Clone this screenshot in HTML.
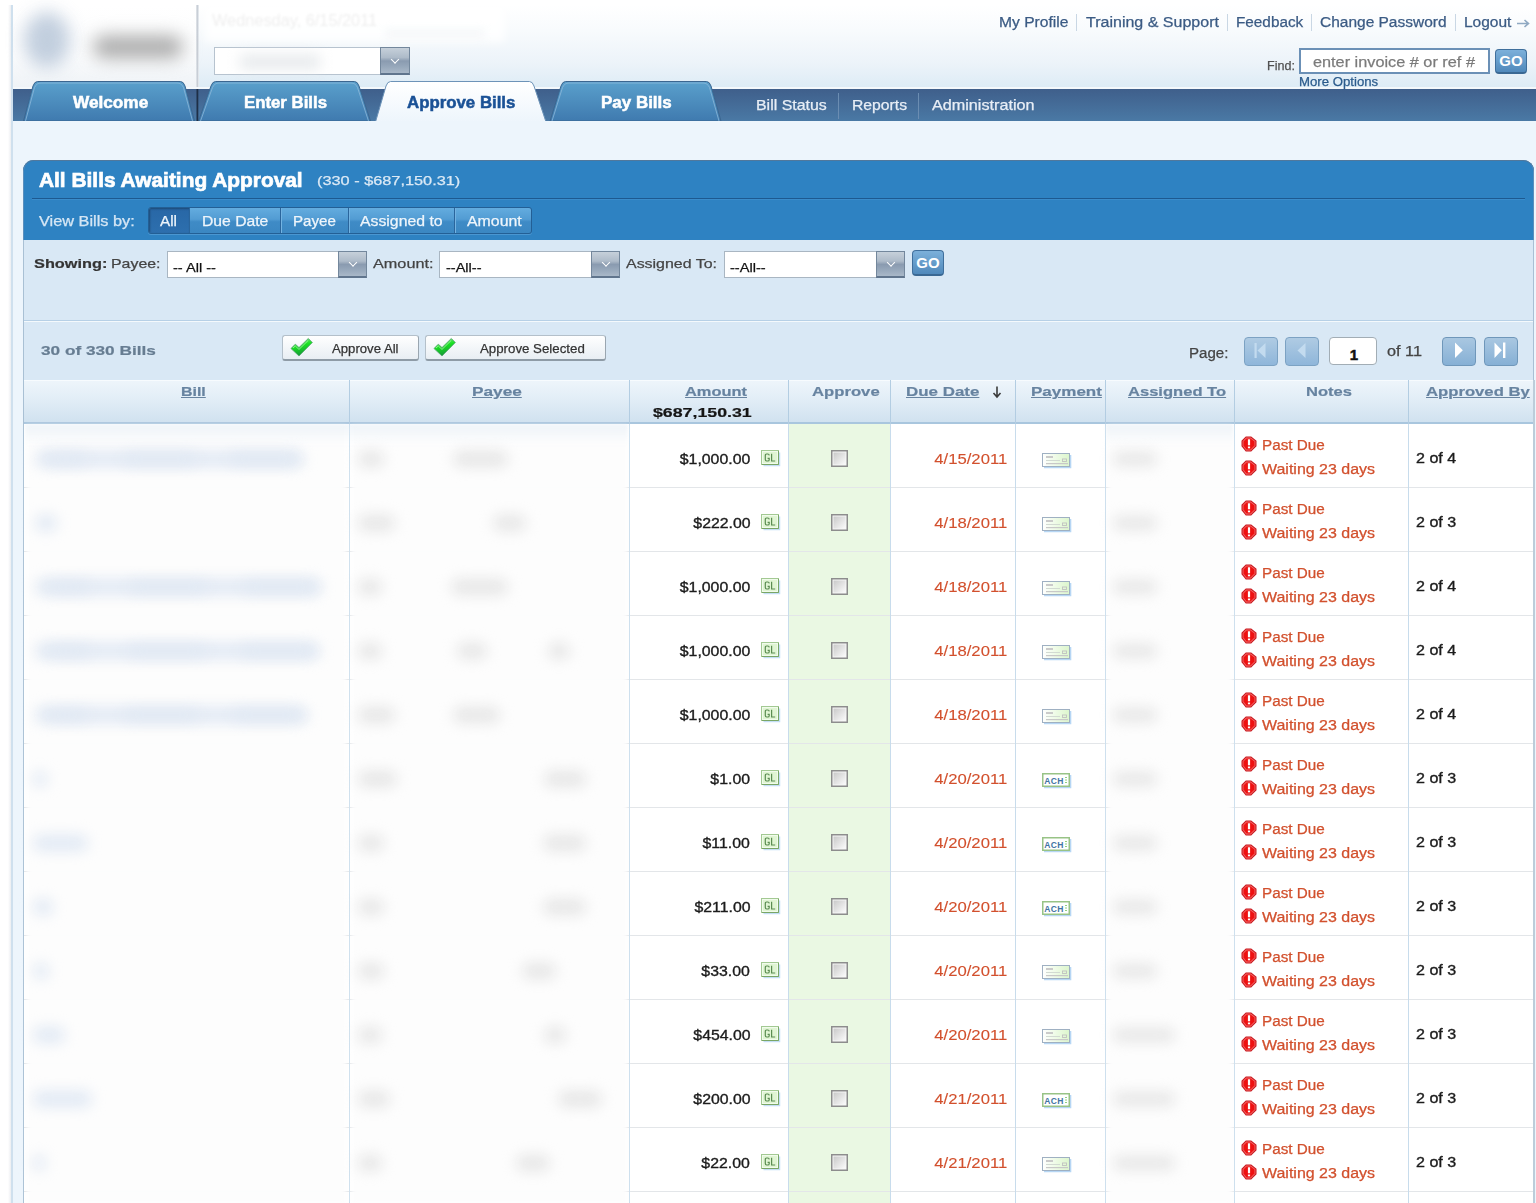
<!DOCTYPE html>
<html><head><meta charset="utf-8">
<style>
html,body{margin:0;padding:0;width:1536px;height:1203px;overflow:hidden;background:#fff;font-family:"Liberation Sans",sans-serif;}
.a{position:absolute;}
.t{position:absolute;white-space:nowrap;}
.sep{position:absolute;width:1px;background:#c9d7e4;}
.nsep{position:absolute;width:1px;background:#6b8db2;top:93px;height:26px;}
.sel{position:absolute;background:#fff;border:1px solid #a9b6c2;box-sizing:border-box;}
.selb{position:absolute;background:linear-gradient(#c6d0da 0%,#aebbc9 38%,#8a9bb0 52%,#97a8bb 75%,#a9b8c8 100%);border:1px solid #73879c;border-bottom:2px solid #60758d;box-sizing:border-box;}
.selb:after{content:"";position:absolute;left:50%;top:50%;width:5px;height:5px;border-right:1.5px solid #fff;border-bottom:1.5px solid #fff;transform:translate(-50%,-75%) rotate(45deg);}
.gob{position:absolute;background:linear-gradient(#7cb0da,#5089bb);border:1px solid #3f6f9c;border-bottom:2px solid #3a6893;border-radius:4px;box-sizing:border-box;color:#fff;font-weight:bold;text-align:center;}
.pg{position:absolute;top:337px;width:34px;height:29px;border-radius:4px;box-sizing:border-box;}
.pgd{background:linear-gradient(#afcbe3,#8fb6da);border:1.5px solid #7ca2c3;}
.pga{background:linear-gradient(#a9c7e1,#86b0d5);border:1.5px solid #6f97ba;}
.cd{position:absolute;width:1px;background:#bcd3e6;}
.rl{position:absolute;height:1px;background:#e3e6e9;}
.blob{position:absolute;border-radius:50%;}
</style></head><body>
<!-- left page edge -->
<div class="a" style="left:8px;top:5px;width:4px;height:1198px;background:linear-gradient(90deg,rgba(200,205,215,0),rgba(200,205,215,.45))"></div>
<div class="a" style="left:11px;top:5px;width:2px;height:1198px;background:#cfe0ee"></div>
<!-- header -->
<div class="a" style="left:13px;top:5px;width:1523px;height:84px;background:linear-gradient(#ffffff 0%,#f8fbfd 30%,#ecf3f9 70%,#dcebf5 100%)"></div>
<div class="a" style="left:13px;top:5px;width:184px;height:84px;background:linear-gradient(#ffffff 0%,#fbfcfd 60%,#eef2f6 100%)"></div>
<div class="a" style="left:196px;top:5px;width:3px;height:84px;background:linear-gradient(90deg,#e4e8ec,#c8ced6,#eef2f6)"></div>
<!-- logo blur -->
<div class="blob" style="left:24px;top:12px;width:46px;height:56px;background:#bccadb;filter:blur(9px);opacity:.9"></div>
<div class="a" style="left:93px;top:36px;width:90px;height:22px;border-radius:11px;background:#aaaaaa;filter:blur(9px)"></div>
<!-- header faint text -->
<div class="a" style="left:205px;top:6px;width:300px;height:36px;background:rgba(255,255,255,.85);filter:blur(4px)"></div>
<div class="a" style="left:212px;top:12px;font-size:16px;line-height:18px;color:#efefef;white-space:nowrap;filter:blur(0.8px);transform:scaleX(1.02);transform-origin:0 0">Wednesday, 6/15/2011</div>
<div class="a" style="left:385px;top:30px;width:100px;height:7px;background:#f4f6f8;filter:blur(4px)"></div>
<!-- header dropdown -->
<div class="sel" style="left:214px;top:47px;width:167px;height:28px;border-color:#b7c3cf"></div>
<div class="a" style="left:240px;top:55px;width:80px;height:14px;background:#e6e9ec;filter:blur(7px)"></div>
<div class="selb" style="left:380px;top:47px;width:30px;height:28px"></div>
<!-- top links separators -->
<div class="sep" style="left:1076px;top:14px;height:17px"></div>
<div class="sep" style="left:1227px;top:14px;height:17px"></div>
<div class="sep" style="left:1311px;top:14px;height:17px"></div>
<div class="sep" style="left:1455px;top:14px;height:17px"></div>
<svg class="a" style="left:1515px;top:17px" width="16" height="12" viewBox="0 0 16 12"><path d="M2 6.5H13M9.5 3L13.5 6.5L9.5 10" stroke="#8fa9c2" stroke-width="1.6" fill="none"/></svg>
<!-- find box -->
<div class="a" style="left:1299px;top:48px;width:191px;height:26px;background:#fff;border:2px solid #6b90b6;box-sizing:border-box"></div>
<div class="gob" style="left:1495px;top:49px;width:32px;height:25px;font-size:15px;line-height:22px">GO</div>
<!-- nav bar -->
<div class="a" style="left:13px;top:87px;width:1523px;height:2px;background:#f4f8fb"></div>
<div class="a" style="left:13px;top:89px;width:1523px;height:32px;background:linear-gradient(#3f5f8b,#4a79a5)"></div>
<svg class="a" style="left:0;top:78px" width="760" height="44" viewBox="0 78 760 44">
<defs>
<linearGradient id="tb" x1="0" y1="0" x2="0" y2="1"><stop offset="0" stop-color="#5aa0cc"/><stop offset="1" stop-color="#3f7aaf"/></linearGradient>
<linearGradient id="ta" x1="0" y1="0" x2="0" y2="1"><stop offset="0" stop-color="#ffffff"/><stop offset="1" stop-color="#edf5fc"/></linearGradient>
</defs>
<path d="M23.5 121 L33 86 Q34.5 81.5 37.5 81.5 L180.5 81.5 Q183.5 81.5 185 86 L194.5 121 Z" fill="url(#tb)" stroke="#3b6690" stroke-width="1"/>
<path d="M25.5 121 L34.5 87.5 Q36.5 83 41 83 L177 83 Q181.5 83 183.5 87.5 L192.5 121" fill="none" stroke="#8cb8da" stroke-width="1" opacity=".8"/>
<path d="M198.5 121 L211 86 Q212.5 81.5 215.5 81.5 L354.5 81.5 Q357.5 81.5 359 86 L370.5 121 Z" fill="url(#tb)" stroke="#3b6690" stroke-width="1"/>
<path d="M200.5 121 L212.5 87.5 Q214.5 83 219 83 L351 83 Q355.5 83 357.5 87.5 L368.5 121" fill="none" stroke="#8cb8da" stroke-width="1" opacity=".8"/>
<path d="M375.5 122 L386 86 Q387.5 81.5 390.5 81.5 L529.5 81.5 Q532.5 81.5 534 86 L546 122 Z" fill="url(#ta)" stroke="#6d93b8" stroke-width="1"/>
<path d="M377 123 L387.5 87.5 Q389.5 83 394 83 L526 83 Q530.5 83 532.5 87.5 L544.5 123 Z" fill="url(#ta)" stroke="none"/>
<path d="M550 121 L561 86 Q562.5 81.5 565.5 81.5 L706.5 81.5 Q709.5 81.5 711 86 L721 121 Z" fill="url(#tb)" stroke="#3b6690" stroke-width="1"/>
<path d="M552 121 L562.5 87.5 Q564.5 83 569 83 L703 83 Q707.5 83 709.5 87.5 L719 121" fill="none" stroke="#8cb8da" stroke-width="1" opacity=".8"/>
<rect x="196.5" y="89" width="1.8" height="32" fill="#1e2f47"/>
</svg>
<div class="nsep" style="left:838px"></div>
<div class="nsep" style="left:918px"></div>
<!-- content bg -->
<div class="a" style="left:13px;top:121px;width:1523px;height:1082px;background:#edf5fc"></div>
<!-- panel -->
<div class="a" style="left:23px;top:160px;width:1511px;height:80px;background:#2e82c2;border-radius:11px 11px 0 0;box-shadow:inset 0 1px 0 #51789c, inset 1px 0 0 #5b8fbd, inset -1px 0 0 #5b8fbd"></div>
<div class="a" style="left:32px;top:198px;width:1493px;height:1px;background:#1d5990"></div>
<div class="a" style="left:32px;top:199px;width:1493px;height:1px;background:#3a8ccb"></div>
<!-- view by buttons -->
<div class="a" style="left:148px;top:207px;width:384px;height:27px;border:1px solid #235f95;border-radius:3px;box-sizing:border-box;background:linear-gradient(#63acdf 0%,#529cd3 45%,#3f8bc6 55%,#3b87c2 100%);overflow:hidden;box-shadow:0 1px 0 rgba(120,180,230,.4)">
 <div class="a" style="left:0;top:0;width:40px;height:25px;background:linear-gradient(#2867a6,#2d6fae);box-shadow:inset 1px 1px 2px rgba(0,0,0,.3)"></div>
 <div class="a" style="left:40px;top:0;width:1px;height:25px;background:#2a659c"></div>
 <div class="a" style="left:131px;top:0;width:1px;height:25px;background:#2a659c"></div><div class="a" style="left:132px;top:0;width:1px;height:25px;background:#73b3e2"></div>
 <div class="a" style="left:199px;top:0;width:1px;height:25px;background:#2a659c"></div><div class="a" style="left:200px;top:0;width:1px;height:25px;background:#73b3e2"></div>
 <div class="a" style="left:305px;top:0;width:1px;height:25px;background:#2a659c"></div><div class="a" style="left:306px;top:0;width:1px;height:25px;background:#73b3e2"></div>
</div>
<!-- filter area -->
<div class="a" style="left:23px;top:240px;width:1511px;height:1000px;background:#d9e8f5;border-left:1px solid #a9c0d4;border-right:1px solid #a9c0d4;box-sizing:border-box"></div>
<div class="a" style="left:24px;top:320px;width:1509px;height:1px;background:#b7d0e6"></div>
<div class="a" style="left:24px;top:321px;width:1509px;height:1px;background:#f4f9fc"></div>
<div class="sel" style="left:167px;top:251px;width:172px;height:27px"></div>
<div class="selb" style="left:338px;top:251px;width:29px;height:27px"></div>
<div class="sel" style="left:439px;top:251px;width:153px;height:27px"></div>
<div class="selb" style="left:591px;top:251px;width:29px;height:27px"></div>
<div class="sel" style="left:724px;top:251px;width:153px;height:27px"></div>
<div class="selb" style="left:876px;top:251px;width:29px;height:27px"></div>
<div class="gob" style="left:912px;top:250px;width:32px;height:26px;font-size:15px;line-height:23px">GO</div>
<!-- approve buttons -->
<div class="a" style="left:282px;top:335px;width:137px;height:26px;border:1px solid #b4c0ca;border-bottom:2px solid #8e9ba6;border-right:1.5px solid #9aa6b0;border-radius:3px;box-sizing:border-box;background:linear-gradient(#ffffff,#e8eef3)"></div>
<div class="a" style="left:425px;top:335px;width:181px;height:26px;border:1px solid #b4c0ca;border-bottom:2px solid #8e9ba6;border-right:1.5px solid #9aa6b0;border-radius:3px;box-sizing:border-box;background:linear-gradient(#ffffff,#e8eef3)"></div>
<svg class="a" style="left:290px;top:337px" width="23" height="21" viewBox="0 0 23 21"><defs><linearGradient id="ck1" x1="0" y1="0" x2="0.3" y2="1"><stop offset="0" stop-color="#8ef090"/><stop offset=".5" stop-color="#18e020"/><stop offset="1" stop-color="#179a3a"/></linearGradient></defs><path d="M1 11.5 L5.3 7.2 L9 10.6 L18.3 1.5 L22.3 5.5 L9 19 Z" fill="url(#ck1)" stroke="#5aa874" stroke-width="0.9" stroke-linejoin="round"/><path d="M3 11 L5.3 9 L9 12.4 L18.3 3.3" stroke="#b8f7b8" stroke-width="0.9" fill="none" opacity=".8"/></svg>
<svg class="a" style="left:433px;top:337px" width="23" height="21" viewBox="0 0 23 21"><defs><linearGradient id="ck2" x1="0" y1="0" x2="0.3" y2="1"><stop offset="0" stop-color="#8ef090"/><stop offset=".5" stop-color="#18e020"/><stop offset="1" stop-color="#179a3a"/></linearGradient></defs><path d="M1 11.5 L5.3 7.2 L9 10.6 L18.3 1.5 L22.3 5.5 L9 19 Z" fill="url(#ck2)" stroke="#5aa874" stroke-width="0.9" stroke-linejoin="round"/><path d="M3 11 L5.3 9 L9 12.4 L18.3 3.3" stroke="#b8f7b8" stroke-width="0.9" fill="none" opacity=".8"/></svg>
<!-- pager -->
<div class="pg pgd" style="left:1244px"><svg width="31" height="26" viewBox="0 0 31 26"><rect x="9.5" y="5" width="2.2" height="15" fill="#c3dbef"/><path d="M20.5 5 L12.5 12.5 L20.5 20Z" fill="#c3dbef"/></svg></div>
<div class="pg pgd" style="left:1285px"><svg width="31" height="26" viewBox="0 0 31 26"><path d="M19.5 5 L11.5 12.5 L19.5 20Z" fill="#c3dbef"/></svg></div>
<div class="a" style="left:1329px;top:337px;width:48px;height:28px;border:1.5px solid #a2adb5;border-radius:4px;background:#fff;box-sizing:border-box"></div>
<div class="pg pga" style="left:1442px"><svg width="31" height="26" viewBox="0 0 31 26"><path d="M12 4.5 L19.8 12.3 L12 20Z" fill="#fff"/></svg></div>
<div class="pg pga" style="left:1484px"><svg width="31" height="26" viewBox="0 0 31 26"><path d="M9.5 4.5 L16.8 12.3 L9.5 20Z" fill="#fff"/><rect x="18" y="4.5" width="2.4" height="15.5" fill="#fff"/></svg></div>
<!-- table header -->
<div class="a" style="left:24px;top:380px;width:1509px;height:44px;background:linear-gradient(#eef5fb,#e3eef7 40%,#cfe1ef 100%)"></div>
<div class="a" style="left:24px;top:380px;width:1509px;height:1px;background:#f7fbfe"></div>
<div class="a" style="left:24px;top:422px;width:1509px;height:2px;background:#a9c6de"></div>
<div class="a" style="left:24px;top:423.5px;width:1509px;height:1px;background:#c9dcec"></div>
<svg class="a" style="left:990px;top:385px" width="14" height="14" viewBox="0 0 14 14"><path d="M7 1.5V11.5M3.5 8L7 12L10.5 8" stroke="#3b3b3b" stroke-width="1.6" fill="none"/></svg>
<!-- table body -->
<div class="a" style="left:24px;top:424px;width:1509px;height:779px;background:#fff"></div>
<div class="a" style="left:789px;top:424px;width:101px;height:779px;background:#eaf8e3"></div>
<div id="grid"></div>
<div class="rl" style="left:24px;top:487px;width:1509px"></div>
<div class="rl" style="left:24px;top:551px;width:1509px"></div>
<div class="rl" style="left:24px;top:615px;width:1509px"></div>
<div class="rl" style="left:24px;top:679px;width:1509px"></div>
<div class="rl" style="left:24px;top:743px;width:1509px"></div>
<div class="rl" style="left:24px;top:807px;width:1509px"></div>
<div class="rl" style="left:24px;top:871px;width:1509px"></div>
<div class="rl" style="left:24px;top:935px;width:1509px"></div>
<div class="rl" style="left:24px;top:999px;width:1509px"></div>
<div class="rl" style="left:24px;top:1063px;width:1509px"></div>
<div class="rl" style="left:24px;top:1127px;width:1509px"></div>
<div class="rl" style="left:24px;top:1191px;width:1509px"></div>
<div class="rl" style="left:24px;top:1255px;width:1509px"></div>
<div class="cd" style="left:348.5px;top:380px;height:44px;background:#b3cde2"></div>
<div class="cd" style="left:348.5px;top:424px;height:779px;background:#c8dcec"></div>
<div class="cd" style="left:629.0px;top:380px;height:44px;background:#b3cde2"></div>
<div class="cd" style="left:629.0px;top:424px;height:779px;background:#c8dcec"></div>
<div class="cd" style="left:788.0px;top:380px;height:44px;background:#b3cde2"></div>
<div class="cd" style="left:788.0px;top:424px;height:779px;background:#c8dcec"></div>
<div class="cd" style="left:890.0px;top:380px;height:44px;background:#b3cde2"></div>
<div class="cd" style="left:890.0px;top:424px;height:779px;background:#c8dcec"></div>
<div class="cd" style="left:1014.5px;top:380px;height:44px;background:#b3cde2"></div>
<div class="cd" style="left:1014.5px;top:424px;height:779px;background:#c8dcec"></div>
<div class="cd" style="left:1104.5px;top:380px;height:44px;background:#b3cde2"></div>
<div class="cd" style="left:1104.5px;top:424px;height:779px;background:#c8dcec"></div>
<div class="cd" style="left:1234.0px;top:380px;height:44px;background:#b3cde2"></div>
<div class="cd" style="left:1234.0px;top:424px;height:779px;background:#c8dcec"></div>
<div class="cd" style="left:1407.5px;top:380px;height:44px;background:#b3cde2"></div>
<div class="cd" style="left:1407.5px;top:424px;height:779px;background:#c8dcec"></div>
<div class="a" style="left:23px;top:380px;width:1px;height:823px;background:#a9c0d4"></div>
<div class="a" style="left:1533px;top:380px;width:2px;height:823px;background:#bccdda"></div>
<div class="a" style="left:27px;top:426px;width:319px;height:777px;background:rgba(253,253,253,.97);filter:blur(2px)"></div>
<div class="a" style="left:352px;top:426px;width:275px;height:777px;background:rgba(253,253,253,.97);filter:blur(2px)"></div>
<div class="a" style="left:1108px;top:426px;width:124px;height:777px;background:rgba(253,253,253,.97);filter:blur(2px)"></div>
<div class="a" style="left:25px;top:424px;width:603px;height:22px;background:linear-gradient(rgba(214,229,242,.35),rgba(240,246,251,0));filter:blur(1.5px)"></div>
<div class="a" style="left:1106px;top:424px;width:127px;height:22px;background:linear-gradient(rgba(214,229,242,.35),rgba(240,246,251,0));filter:blur(1.5px)"></div>
<div class="blob" style="left:35.0px;top:451px;width:268.6px;height:16px;border-radius:8px;background:#e1e9f4;filter:blur(7px)"></div>
<div class="blob" style="left:45.7px;top:454px;width:41.2px;height:10px;border-radius:5px;background:#e0e8f3;filter:blur(7px)"></div>
<div class="blob" style="left:122.6px;top:454px;width:74.1px;height:10px;border-radius:5px;background:#e0e8f3;filter:blur(7px)"></div>
<div class="blob" style="left:229.7px;top:454px;width:68.7px;height:10px;border-radius:5px;background:#e0e8f3;filter:blur(7px)"></div>
<div class="blob" style="left:358px;top:451px;width:26.4px;height:16px;border-radius:8px;background:#e6e6e6;filter:blur(7px)"></div>
<div class="blob" style="left:453px;top:451px;width:54.5px;height:16px;border-radius:8px;background:#e6e6e6;filter:blur(7px)"></div>
<div class="blob" style="left:1113px;top:452px;width:44.0px;height:14px;border-radius:7px;background:#e6e6e6;filter:blur(7px)"></div>
<div class="blob" style="left:35.0px;top:515px;width:22.0px;height:16px;border-radius:8px;background:#e1e9f4;filter:blur(7px)"></div>
<div class="blob" style="left:358px;top:515px;width:36.5px;height:16px;border-radius:8px;background:#e6e6e6;filter:blur(7px)"></div>
<div class="blob" style="left:493px;top:515px;width:32.7px;height:16px;border-radius:8px;background:#e6e6e6;filter:blur(7px)"></div>
<div class="blob" style="left:1113px;top:516px;width:44.0px;height:14px;border-radius:7px;background:#e6e6e6;filter:blur(7px)"></div>
<div class="blob" style="left:35.0px;top:579px;width:286.8px;height:16px;border-radius:8px;background:#e1e9f4;filter:blur(7px)"></div>
<div class="blob" style="left:46.6px;top:582px;width:43.9px;height:10px;border-radius:5px;background:#e0e8f3;filter:blur(7px)"></div>
<div class="blob" style="left:128.6px;top:582px;width:79.1px;height:10px;border-radius:5px;background:#e0e8f3;filter:blur(7px)"></div>
<div class="blob" style="left:242.8px;top:582px;width:73.2px;height:10px;border-radius:5px;background:#e0e8f3;filter:blur(7px)"></div>
<div class="blob" style="left:358px;top:579px;width:24.0px;height:16px;border-radius:8px;background:#e6e6e6;filter:blur(7px)"></div>
<div class="blob" style="left:451px;top:579px;width:56.5px;height:16px;border-radius:8px;background:#e6e6e6;filter:blur(7px)"></div>
<div class="blob" style="left:1113px;top:580px;width:44.0px;height:14px;border-radius:7px;background:#e6e6e6;filter:blur(7px)"></div>
<div class="blob" style="left:35.0px;top:643px;width:284.8px;height:16px;border-radius:8px;background:#e1e9f4;filter:blur(7px)"></div>
<div class="blob" style="left:46.5px;top:646px;width:43.6px;height:10px;border-radius:5px;background:#e0e8f3;filter:blur(7px)"></div>
<div class="blob" style="left:128.0px;top:646px;width:78.5px;height:10px;border-radius:5px;background:#e0e8f3;filter:blur(7px)"></div>
<div class="blob" style="left:241.4px;top:646px;width:72.7px;height:10px;border-radius:5px;background:#e0e8f3;filter:blur(7px)"></div>
<div class="blob" style="left:358px;top:643px;width:24.0px;height:16px;border-radius:8px;background:#e6e6e6;filter:blur(7px)"></div>
<div class="blob" style="left:457px;top:643px;width:30.0px;height:16px;border-radius:8px;background:#e6e6e6;filter:blur(7px)"></div>
<div class="blob" style="left:548px;top:643px;width:22.0px;height:16px;border-radius:8px;background:#e6e6e6;filter:blur(7px)"></div>
<div class="blob" style="left:1113px;top:644px;width:44.0px;height:14px;border-radius:7px;background:#e6e6e6;filter:blur(7px)"></div>
<div class="blob" style="left:35.0px;top:707px;width:272.7px;height:16px;border-radius:8px;background:#e1e9f4;filter:blur(7px)"></div>
<div class="blob" style="left:45.9px;top:710px;width:41.8px;height:10px;border-radius:5px;background:#e0e8f3;filter:blur(7px)"></div>
<div class="blob" style="left:124.0px;top:710px;width:75.2px;height:10px;border-radius:5px;background:#e0e8f3;filter:blur(7px)"></div>
<div class="blob" style="left:232.7px;top:710px;width:69.7px;height:10px;border-radius:5px;background:#e0e8f3;filter:blur(7px)"></div>
<div class="blob" style="left:358px;top:707px;width:36.5px;height:16px;border-radius:8px;background:#e6e6e6;filter:blur(7px)"></div>
<div class="blob" style="left:453px;top:707px;width:46.5px;height:16px;border-radius:8px;background:#e6e6e6;filter:blur(7px)"></div>
<div class="blob" style="left:1113px;top:708px;width:44.0px;height:14px;border-radius:7px;background:#e6e6e6;filter:blur(7px)"></div>
<div class="blob" style="left:33.0px;top:771px;width:14.0px;height:16px;border-radius:8px;background:#e1e9f4;filter:blur(7px)"></div>
<div class="blob" style="left:358px;top:771px;width:38.5px;height:16px;border-radius:8px;background:#e6e6e6;filter:blur(7px)"></div>
<div class="blob" style="left:543.8px;top:771px;width:42.2px;height:16px;border-radius:8px;background:#e6e6e6;filter:blur(7px)"></div>
<div class="blob" style="left:1113px;top:772px;width:44.0px;height:14px;border-radius:7px;background:#e6e6e6;filter:blur(7px)"></div>
<div class="blob" style="left:33.0px;top:835px;width:54.6px;height:16px;border-radius:8px;background:#e1e9f4;filter:blur(7px)"></div>
<div class="blob" style="left:358px;top:835px;width:26.4px;height:16px;border-radius:8px;background:#e6e6e6;filter:blur(7px)"></div>
<div class="blob" style="left:543px;top:835px;width:43.0px;height:16px;border-radius:8px;background:#e6e6e6;filter:blur(7px)"></div>
<div class="blob" style="left:1113px;top:836px;width:44.0px;height:14px;border-radius:7px;background:#e6e6e6;filter:blur(7px)"></div>
<div class="blob" style="left:33.0px;top:899px;width:20.0px;height:16px;border-radius:8px;background:#e1e9f4;filter:blur(7px)"></div>
<div class="blob" style="left:358px;top:899px;width:26.0px;height:16px;border-radius:8px;background:#e6e6e6;filter:blur(7px)"></div>
<div class="blob" style="left:543px;top:899px;width:43.0px;height:16px;border-radius:8px;background:#e6e6e6;filter:blur(7px)"></div>
<div class="blob" style="left:1113px;top:900px;width:44.0px;height:14px;border-radius:7px;background:#e6e6e6;filter:blur(7px)"></div>
<div class="blob" style="left:33.0px;top:963px;width:16.0px;height:16px;border-radius:8px;background:#e1e9f4;filter:blur(7px)"></div>
<div class="blob" style="left:358px;top:963px;width:26.0px;height:16px;border-radius:8px;background:#e6e6e6;filter:blur(7px)"></div>
<div class="blob" style="left:521.6px;top:963px;width:34.4px;height:16px;border-radius:8px;background:#e6e6e6;filter:blur(7px)"></div>
<div class="blob" style="left:1113px;top:964px;width:44.0px;height:14px;border-radius:7px;background:#e6e6e6;filter:blur(7px)"></div>
<div class="blob" style="left:33.0px;top:1027px;width:32.4px;height:16px;border-radius:8px;background:#e1e9f4;filter:blur(7px)"></div>
<div class="blob" style="left:358px;top:1027px;width:24.0px;height:16px;border-radius:8px;background:#e6e6e6;filter:blur(7px)"></div>
<div class="blob" style="left:543.8px;top:1027px;width:22.2px;height:16px;border-radius:8px;background:#e6e6e6;filter:blur(7px)"></div>
<div class="blob" style="left:1113px;top:1028px;width:62.0px;height:14px;border-radius:7px;background:#e6e6e6;filter:blur(7px)"></div>
<div class="blob" style="left:33.0px;top:1091px;width:58.7px;height:16px;border-radius:8px;background:#e1e9f4;filter:blur(7px)"></div>
<div class="blob" style="left:358px;top:1091px;width:32.0px;height:16px;border-radius:8px;background:#e6e6e6;filter:blur(7px)"></div>
<div class="blob" style="left:558px;top:1091px;width:44.0px;height:16px;border-radius:8px;background:#e6e6e6;filter:blur(7px)"></div>
<div class="blob" style="left:1113px;top:1092px;width:62.0px;height:14px;border-radius:7px;background:#e6e6e6;filter:blur(7px)"></div>
<div class="blob" style="left:33.0px;top:1155px;width:12.0px;height:16px;border-radius:8px;background:#e1e9f4;filter:blur(7px)"></div>
<div class="blob" style="left:358px;top:1155px;width:24.0px;height:16px;border-radius:8px;background:#e6e6e6;filter:blur(7px)"></div>
<div class="blob" style="left:515.5px;top:1155px;width:34.5px;height:16px;border-radius:8px;background:#e6e6e6;filter:blur(7px)"></div>
<div class="blob" style="left:1113px;top:1156px;width:62.0px;height:14px;border-radius:7px;background:#e6e6e6;filter:blur(7px)"></div>
<svg class="a" style="left:761px;top:450px" width="20" height="17" viewBox="0 0 20 17"><path d="M2.5 15.5H18.5V2.5" stroke="#c4def6" stroke-width="1.5" fill="none"/><rect x="0.5" y="0.5" width="17" height="14" fill="#e0f5d3" stroke="#a3c993"/><path d="M17.5 1V14.5H1" stroke="#7aa666" stroke-width="1" fill="none"/><rect x="1.5" y="1.5" width="15" height="12" fill="none" stroke="#f1fbec" stroke-width="1"/><path d="M8.3 5.3Q8 4 6.8 4H5.6Q4.3 4 4.3 5.4V9.6Q4.3 11 5.6 11H6.9Q8.2 11 8.2 9.7V8.3H6.6" stroke="#5b8c52" stroke-width="1.2" fill="none"/><path d="M10.6 3.8V11H14.2" stroke="#5b8c52" stroke-width="1.2" fill="none"/></svg>
<svg class="a" style="left:831px;top:450px" width="17" height="17" viewBox="0 0 17 17"><defs><linearGradient id="cg0" x1="0" y1="0" x2="1" y2="1"><stop offset="0" stop-color="#c9c9c9"/><stop offset="1" stop-color="#fbfbfb"/></linearGradient></defs><rect x="0.75" y="0.75" width="15.5" height="15.5" fill="#f6f6f6" stroke="#8d8d8d" stroke-width="1.5"/><rect x="2.5" y="2.5" width="12" height="12" fill="url(#cg0)"/></svg>
<svg class="a" style="left:1042px;top:453px" width="30" height="16" viewBox="0 0 30 16"><path d="M2 14.5H28.5V2" stroke="#b6d6f4" stroke-width="1.6" fill="none"/><defs><linearGradient id="pc0" x1="0" y1="0" x2="1" y2="0"><stop offset="0" stop-color="#ffffff"/><stop offset="1" stop-color="#dcf6cc"/></linearGradient></defs><rect x="0.5" y="0.5" width="27" height="13" fill="url(#pc0)" stroke="#9fb0c2"/><rect x="4" y="3" width="7" height="2" fill="#cacaca"/><rect x="4" y="7" width="14" height="1" fill="#d2dad2"/><rect x="4" y="10" width="22" height="1.2" fill="#c8c8c8"/><rect x="20.5" y="6" width="4" height="2.5" fill="none" stroke="#c0c0c0" stroke-width=".9"/></svg>
<svg class="a" style="left:1241px;top:436px" width="16" height="16" viewBox="0 0 16 16"><path d="M4.8 0.5H10.2L15.5 4.8V10.2L10.2 15.5H4.8L0.5 10.2V4.8Z" fill="#c8161c"/><path d="M5.2 1.6H9.8L14.4 5.2V9.8L9.8 14.4H5.2L1.6 9.8V5.2Z" fill="#f26a6a"/><path d="M5.5 2.5H9.5L13.5 5.5V9.5L9.5 13.5H5.5L2.5 9.5V5.5Z" fill="#ee1111"/><rect x="6.9" y="3.3" width="2.2" height="6" fill="#fff"/><rect x="6.9" y="10.5" width="2.2" height="1.8" fill="#fff"/></svg>
<svg class="a" style="left:1241px;top:460px" width="16" height="16" viewBox="0 0 16 16"><path d="M4.8 0.5H10.2L15.5 4.8V10.2L10.2 15.5H4.8L0.5 10.2V4.8Z" fill="#c8161c"/><path d="M5.2 1.6H9.8L14.4 5.2V9.8L9.8 14.4H5.2L1.6 9.8V5.2Z" fill="#f26a6a"/><path d="M5.5 2.5H9.5L13.5 5.5V9.5L9.5 13.5H5.5L2.5 9.5V5.5Z" fill="#ee1111"/><rect x="6.9" y="3.3" width="2.2" height="6" fill="#fff"/><rect x="6.9" y="10.5" width="2.2" height="1.8" fill="#fff"/></svg>
<svg class="a" style="left:761px;top:514px" width="20" height="17" viewBox="0 0 20 17"><path d="M2.5 15.5H18.5V2.5" stroke="#c4def6" stroke-width="1.5" fill="none"/><rect x="0.5" y="0.5" width="17" height="14" fill="#e0f5d3" stroke="#a3c993"/><path d="M17.5 1V14.5H1" stroke="#7aa666" stroke-width="1" fill="none"/><rect x="1.5" y="1.5" width="15" height="12" fill="none" stroke="#f1fbec" stroke-width="1"/><path d="M8.3 5.3Q8 4 6.8 4H5.6Q4.3 4 4.3 5.4V9.6Q4.3 11 5.6 11H6.9Q8.2 11 8.2 9.7V8.3H6.6" stroke="#5b8c52" stroke-width="1.2" fill="none"/><path d="M10.6 3.8V11H14.2" stroke="#5b8c52" stroke-width="1.2" fill="none"/></svg>
<svg class="a" style="left:831px;top:514px" width="17" height="17" viewBox="0 0 17 17"><defs><linearGradient id="cg1" x1="0" y1="0" x2="1" y2="1"><stop offset="0" stop-color="#c9c9c9"/><stop offset="1" stop-color="#fbfbfb"/></linearGradient></defs><rect x="0.75" y="0.75" width="15.5" height="15.5" fill="#f6f6f6" stroke="#8d8d8d" stroke-width="1.5"/><rect x="2.5" y="2.5" width="12" height="12" fill="url(#cg1)"/></svg>
<svg class="a" style="left:1042px;top:517px" width="30" height="16" viewBox="0 0 30 16"><path d="M2 14.5H28.5V2" stroke="#b6d6f4" stroke-width="1.6" fill="none"/><defs><linearGradient id="pc1" x1="0" y1="0" x2="1" y2="0"><stop offset="0" stop-color="#ffffff"/><stop offset="1" stop-color="#dcf6cc"/></linearGradient></defs><rect x="0.5" y="0.5" width="27" height="13" fill="url(#pc1)" stroke="#9fb0c2"/><rect x="4" y="3" width="7" height="2" fill="#cacaca"/><rect x="4" y="7" width="14" height="1" fill="#d2dad2"/><rect x="4" y="10" width="22" height="1.2" fill="#c8c8c8"/><rect x="20.5" y="6" width="4" height="2.5" fill="none" stroke="#c0c0c0" stroke-width=".9"/></svg>
<svg class="a" style="left:1241px;top:500px" width="16" height="16" viewBox="0 0 16 16"><path d="M4.8 0.5H10.2L15.5 4.8V10.2L10.2 15.5H4.8L0.5 10.2V4.8Z" fill="#c8161c"/><path d="M5.2 1.6H9.8L14.4 5.2V9.8L9.8 14.4H5.2L1.6 9.8V5.2Z" fill="#f26a6a"/><path d="M5.5 2.5H9.5L13.5 5.5V9.5L9.5 13.5H5.5L2.5 9.5V5.5Z" fill="#ee1111"/><rect x="6.9" y="3.3" width="2.2" height="6" fill="#fff"/><rect x="6.9" y="10.5" width="2.2" height="1.8" fill="#fff"/></svg>
<svg class="a" style="left:1241px;top:524px" width="16" height="16" viewBox="0 0 16 16"><path d="M4.8 0.5H10.2L15.5 4.8V10.2L10.2 15.5H4.8L0.5 10.2V4.8Z" fill="#c8161c"/><path d="M5.2 1.6H9.8L14.4 5.2V9.8L9.8 14.4H5.2L1.6 9.8V5.2Z" fill="#f26a6a"/><path d="M5.5 2.5H9.5L13.5 5.5V9.5L9.5 13.5H5.5L2.5 9.5V5.5Z" fill="#ee1111"/><rect x="6.9" y="3.3" width="2.2" height="6" fill="#fff"/><rect x="6.9" y="10.5" width="2.2" height="1.8" fill="#fff"/></svg>
<svg class="a" style="left:761px;top:578px" width="20" height="17" viewBox="0 0 20 17"><path d="M2.5 15.5H18.5V2.5" stroke="#c4def6" stroke-width="1.5" fill="none"/><rect x="0.5" y="0.5" width="17" height="14" fill="#e0f5d3" stroke="#a3c993"/><path d="M17.5 1V14.5H1" stroke="#7aa666" stroke-width="1" fill="none"/><rect x="1.5" y="1.5" width="15" height="12" fill="none" stroke="#f1fbec" stroke-width="1"/><path d="M8.3 5.3Q8 4 6.8 4H5.6Q4.3 4 4.3 5.4V9.6Q4.3 11 5.6 11H6.9Q8.2 11 8.2 9.7V8.3H6.6" stroke="#5b8c52" stroke-width="1.2" fill="none"/><path d="M10.6 3.8V11H14.2" stroke="#5b8c52" stroke-width="1.2" fill="none"/></svg>
<svg class="a" style="left:831px;top:578px" width="17" height="17" viewBox="0 0 17 17"><defs><linearGradient id="cg2" x1="0" y1="0" x2="1" y2="1"><stop offset="0" stop-color="#c9c9c9"/><stop offset="1" stop-color="#fbfbfb"/></linearGradient></defs><rect x="0.75" y="0.75" width="15.5" height="15.5" fill="#f6f6f6" stroke="#8d8d8d" stroke-width="1.5"/><rect x="2.5" y="2.5" width="12" height="12" fill="url(#cg2)"/></svg>
<svg class="a" style="left:1042px;top:581px" width="30" height="16" viewBox="0 0 30 16"><path d="M2 14.5H28.5V2" stroke="#b6d6f4" stroke-width="1.6" fill="none"/><defs><linearGradient id="pc2" x1="0" y1="0" x2="1" y2="0"><stop offset="0" stop-color="#ffffff"/><stop offset="1" stop-color="#dcf6cc"/></linearGradient></defs><rect x="0.5" y="0.5" width="27" height="13" fill="url(#pc2)" stroke="#9fb0c2"/><rect x="4" y="3" width="7" height="2" fill="#cacaca"/><rect x="4" y="7" width="14" height="1" fill="#d2dad2"/><rect x="4" y="10" width="22" height="1.2" fill="#c8c8c8"/><rect x="20.5" y="6" width="4" height="2.5" fill="none" stroke="#c0c0c0" stroke-width=".9"/></svg>
<svg class="a" style="left:1241px;top:564px" width="16" height="16" viewBox="0 0 16 16"><path d="M4.8 0.5H10.2L15.5 4.8V10.2L10.2 15.5H4.8L0.5 10.2V4.8Z" fill="#c8161c"/><path d="M5.2 1.6H9.8L14.4 5.2V9.8L9.8 14.4H5.2L1.6 9.8V5.2Z" fill="#f26a6a"/><path d="M5.5 2.5H9.5L13.5 5.5V9.5L9.5 13.5H5.5L2.5 9.5V5.5Z" fill="#ee1111"/><rect x="6.9" y="3.3" width="2.2" height="6" fill="#fff"/><rect x="6.9" y="10.5" width="2.2" height="1.8" fill="#fff"/></svg>
<svg class="a" style="left:1241px;top:588px" width="16" height="16" viewBox="0 0 16 16"><path d="M4.8 0.5H10.2L15.5 4.8V10.2L10.2 15.5H4.8L0.5 10.2V4.8Z" fill="#c8161c"/><path d="M5.2 1.6H9.8L14.4 5.2V9.8L9.8 14.4H5.2L1.6 9.8V5.2Z" fill="#f26a6a"/><path d="M5.5 2.5H9.5L13.5 5.5V9.5L9.5 13.5H5.5L2.5 9.5V5.5Z" fill="#ee1111"/><rect x="6.9" y="3.3" width="2.2" height="6" fill="#fff"/><rect x="6.9" y="10.5" width="2.2" height="1.8" fill="#fff"/></svg>
<svg class="a" style="left:761px;top:642px" width="20" height="17" viewBox="0 0 20 17"><path d="M2.5 15.5H18.5V2.5" stroke="#c4def6" stroke-width="1.5" fill="none"/><rect x="0.5" y="0.5" width="17" height="14" fill="#e0f5d3" stroke="#a3c993"/><path d="M17.5 1V14.5H1" stroke="#7aa666" stroke-width="1" fill="none"/><rect x="1.5" y="1.5" width="15" height="12" fill="none" stroke="#f1fbec" stroke-width="1"/><path d="M8.3 5.3Q8 4 6.8 4H5.6Q4.3 4 4.3 5.4V9.6Q4.3 11 5.6 11H6.9Q8.2 11 8.2 9.7V8.3H6.6" stroke="#5b8c52" stroke-width="1.2" fill="none"/><path d="M10.6 3.8V11H14.2" stroke="#5b8c52" stroke-width="1.2" fill="none"/></svg>
<svg class="a" style="left:831px;top:642px" width="17" height="17" viewBox="0 0 17 17"><defs><linearGradient id="cg3" x1="0" y1="0" x2="1" y2="1"><stop offset="0" stop-color="#c9c9c9"/><stop offset="1" stop-color="#fbfbfb"/></linearGradient></defs><rect x="0.75" y="0.75" width="15.5" height="15.5" fill="#f6f6f6" stroke="#8d8d8d" stroke-width="1.5"/><rect x="2.5" y="2.5" width="12" height="12" fill="url(#cg3)"/></svg>
<svg class="a" style="left:1042px;top:645px" width="30" height="16" viewBox="0 0 30 16"><path d="M2 14.5H28.5V2" stroke="#b6d6f4" stroke-width="1.6" fill="none"/><defs><linearGradient id="pc3" x1="0" y1="0" x2="1" y2="0"><stop offset="0" stop-color="#ffffff"/><stop offset="1" stop-color="#dcf6cc"/></linearGradient></defs><rect x="0.5" y="0.5" width="27" height="13" fill="url(#pc3)" stroke="#9fb0c2"/><rect x="4" y="3" width="7" height="2" fill="#cacaca"/><rect x="4" y="7" width="14" height="1" fill="#d2dad2"/><rect x="4" y="10" width="22" height="1.2" fill="#c8c8c8"/><rect x="20.5" y="6" width="4" height="2.5" fill="none" stroke="#c0c0c0" stroke-width=".9"/></svg>
<svg class="a" style="left:1241px;top:628px" width="16" height="16" viewBox="0 0 16 16"><path d="M4.8 0.5H10.2L15.5 4.8V10.2L10.2 15.5H4.8L0.5 10.2V4.8Z" fill="#c8161c"/><path d="M5.2 1.6H9.8L14.4 5.2V9.8L9.8 14.4H5.2L1.6 9.8V5.2Z" fill="#f26a6a"/><path d="M5.5 2.5H9.5L13.5 5.5V9.5L9.5 13.5H5.5L2.5 9.5V5.5Z" fill="#ee1111"/><rect x="6.9" y="3.3" width="2.2" height="6" fill="#fff"/><rect x="6.9" y="10.5" width="2.2" height="1.8" fill="#fff"/></svg>
<svg class="a" style="left:1241px;top:652px" width="16" height="16" viewBox="0 0 16 16"><path d="M4.8 0.5H10.2L15.5 4.8V10.2L10.2 15.5H4.8L0.5 10.2V4.8Z" fill="#c8161c"/><path d="M5.2 1.6H9.8L14.4 5.2V9.8L9.8 14.4H5.2L1.6 9.8V5.2Z" fill="#f26a6a"/><path d="M5.5 2.5H9.5L13.5 5.5V9.5L9.5 13.5H5.5L2.5 9.5V5.5Z" fill="#ee1111"/><rect x="6.9" y="3.3" width="2.2" height="6" fill="#fff"/><rect x="6.9" y="10.5" width="2.2" height="1.8" fill="#fff"/></svg>
<svg class="a" style="left:761px;top:706px" width="20" height="17" viewBox="0 0 20 17"><path d="M2.5 15.5H18.5V2.5" stroke="#c4def6" stroke-width="1.5" fill="none"/><rect x="0.5" y="0.5" width="17" height="14" fill="#e0f5d3" stroke="#a3c993"/><path d="M17.5 1V14.5H1" stroke="#7aa666" stroke-width="1" fill="none"/><rect x="1.5" y="1.5" width="15" height="12" fill="none" stroke="#f1fbec" stroke-width="1"/><path d="M8.3 5.3Q8 4 6.8 4H5.6Q4.3 4 4.3 5.4V9.6Q4.3 11 5.6 11H6.9Q8.2 11 8.2 9.7V8.3H6.6" stroke="#5b8c52" stroke-width="1.2" fill="none"/><path d="M10.6 3.8V11H14.2" stroke="#5b8c52" stroke-width="1.2" fill="none"/></svg>
<svg class="a" style="left:831px;top:706px" width="17" height="17" viewBox="0 0 17 17"><defs><linearGradient id="cg4" x1="0" y1="0" x2="1" y2="1"><stop offset="0" stop-color="#c9c9c9"/><stop offset="1" stop-color="#fbfbfb"/></linearGradient></defs><rect x="0.75" y="0.75" width="15.5" height="15.5" fill="#f6f6f6" stroke="#8d8d8d" stroke-width="1.5"/><rect x="2.5" y="2.5" width="12" height="12" fill="url(#cg4)"/></svg>
<svg class="a" style="left:1042px;top:709px" width="30" height="16" viewBox="0 0 30 16"><path d="M2 14.5H28.5V2" stroke="#b6d6f4" stroke-width="1.6" fill="none"/><defs><linearGradient id="pc4" x1="0" y1="0" x2="1" y2="0"><stop offset="0" stop-color="#ffffff"/><stop offset="1" stop-color="#dcf6cc"/></linearGradient></defs><rect x="0.5" y="0.5" width="27" height="13" fill="url(#pc4)" stroke="#9fb0c2"/><rect x="4" y="3" width="7" height="2" fill="#cacaca"/><rect x="4" y="7" width="14" height="1" fill="#d2dad2"/><rect x="4" y="10" width="22" height="1.2" fill="#c8c8c8"/><rect x="20.5" y="6" width="4" height="2.5" fill="none" stroke="#c0c0c0" stroke-width=".9"/></svg>
<svg class="a" style="left:1241px;top:692px" width="16" height="16" viewBox="0 0 16 16"><path d="M4.8 0.5H10.2L15.5 4.8V10.2L10.2 15.5H4.8L0.5 10.2V4.8Z" fill="#c8161c"/><path d="M5.2 1.6H9.8L14.4 5.2V9.8L9.8 14.4H5.2L1.6 9.8V5.2Z" fill="#f26a6a"/><path d="M5.5 2.5H9.5L13.5 5.5V9.5L9.5 13.5H5.5L2.5 9.5V5.5Z" fill="#ee1111"/><rect x="6.9" y="3.3" width="2.2" height="6" fill="#fff"/><rect x="6.9" y="10.5" width="2.2" height="1.8" fill="#fff"/></svg>
<svg class="a" style="left:1241px;top:716px" width="16" height="16" viewBox="0 0 16 16"><path d="M4.8 0.5H10.2L15.5 4.8V10.2L10.2 15.5H4.8L0.5 10.2V4.8Z" fill="#c8161c"/><path d="M5.2 1.6H9.8L14.4 5.2V9.8L9.8 14.4H5.2L1.6 9.8V5.2Z" fill="#f26a6a"/><path d="M5.5 2.5H9.5L13.5 5.5V9.5L9.5 13.5H5.5L2.5 9.5V5.5Z" fill="#ee1111"/><rect x="6.9" y="3.3" width="2.2" height="6" fill="#fff"/><rect x="6.9" y="10.5" width="2.2" height="1.8" fill="#fff"/></svg>
<svg class="a" style="left:761px;top:770px" width="20" height="17" viewBox="0 0 20 17"><path d="M2.5 15.5H18.5V2.5" stroke="#c4def6" stroke-width="1.5" fill="none"/><rect x="0.5" y="0.5" width="17" height="14" fill="#e0f5d3" stroke="#a3c993"/><path d="M17.5 1V14.5H1" stroke="#7aa666" stroke-width="1" fill="none"/><rect x="1.5" y="1.5" width="15" height="12" fill="none" stroke="#f1fbec" stroke-width="1"/><path d="M8.3 5.3Q8 4 6.8 4H5.6Q4.3 4 4.3 5.4V9.6Q4.3 11 5.6 11H6.9Q8.2 11 8.2 9.7V8.3H6.6" stroke="#5b8c52" stroke-width="1.2" fill="none"/><path d="M10.6 3.8V11H14.2" stroke="#5b8c52" stroke-width="1.2" fill="none"/></svg>
<svg class="a" style="left:831px;top:770px" width="17" height="17" viewBox="0 0 17 17"><defs><linearGradient id="cg5" x1="0" y1="0" x2="1" y2="1"><stop offset="0" stop-color="#c9c9c9"/><stop offset="1" stop-color="#fbfbfb"/></linearGradient></defs><rect x="0.75" y="0.75" width="15.5" height="15.5" fill="#f6f6f6" stroke="#8d8d8d" stroke-width="1.5"/><rect x="2.5" y="2.5" width="12" height="12" fill="url(#cg5)"/></svg>
<svg class="a" style="left:1042px;top:773px" width="30" height="16" viewBox="0 0 30 16"><path d="M2 14.5H28.5V2" stroke="#b6d6f4" stroke-width="1.6" fill="none"/><rect x="0.75" y="0.75" width="26.5" height="12.5" fill="#fff" stroke="#98c386" stroke-width="1.5"/><text x="12" y="10.6" font-family="Liberation Sans" font-size="8.5" font-weight="bold" fill="#4173a3" text-anchor="middle" letter-spacing="0.3">ACH</text><path d="M23 4.5H25M23 7H25M23 9.5H25" stroke="#90d080" stroke-width="1"/></svg>
<svg class="a" style="left:1241px;top:756px" width="16" height="16" viewBox="0 0 16 16"><path d="M4.8 0.5H10.2L15.5 4.8V10.2L10.2 15.5H4.8L0.5 10.2V4.8Z" fill="#c8161c"/><path d="M5.2 1.6H9.8L14.4 5.2V9.8L9.8 14.4H5.2L1.6 9.8V5.2Z" fill="#f26a6a"/><path d="M5.5 2.5H9.5L13.5 5.5V9.5L9.5 13.5H5.5L2.5 9.5V5.5Z" fill="#ee1111"/><rect x="6.9" y="3.3" width="2.2" height="6" fill="#fff"/><rect x="6.9" y="10.5" width="2.2" height="1.8" fill="#fff"/></svg>
<svg class="a" style="left:1241px;top:780px" width="16" height="16" viewBox="0 0 16 16"><path d="M4.8 0.5H10.2L15.5 4.8V10.2L10.2 15.5H4.8L0.5 10.2V4.8Z" fill="#c8161c"/><path d="M5.2 1.6H9.8L14.4 5.2V9.8L9.8 14.4H5.2L1.6 9.8V5.2Z" fill="#f26a6a"/><path d="M5.5 2.5H9.5L13.5 5.5V9.5L9.5 13.5H5.5L2.5 9.5V5.5Z" fill="#ee1111"/><rect x="6.9" y="3.3" width="2.2" height="6" fill="#fff"/><rect x="6.9" y="10.5" width="2.2" height="1.8" fill="#fff"/></svg>
<svg class="a" style="left:761px;top:834px" width="20" height="17" viewBox="0 0 20 17"><path d="M2.5 15.5H18.5V2.5" stroke="#c4def6" stroke-width="1.5" fill="none"/><rect x="0.5" y="0.5" width="17" height="14" fill="#e0f5d3" stroke="#a3c993"/><path d="M17.5 1V14.5H1" stroke="#7aa666" stroke-width="1" fill="none"/><rect x="1.5" y="1.5" width="15" height="12" fill="none" stroke="#f1fbec" stroke-width="1"/><path d="M8.3 5.3Q8 4 6.8 4H5.6Q4.3 4 4.3 5.4V9.6Q4.3 11 5.6 11H6.9Q8.2 11 8.2 9.7V8.3H6.6" stroke="#5b8c52" stroke-width="1.2" fill="none"/><path d="M10.6 3.8V11H14.2" stroke="#5b8c52" stroke-width="1.2" fill="none"/></svg>
<svg class="a" style="left:831px;top:834px" width="17" height="17" viewBox="0 0 17 17"><defs><linearGradient id="cg6" x1="0" y1="0" x2="1" y2="1"><stop offset="0" stop-color="#c9c9c9"/><stop offset="1" stop-color="#fbfbfb"/></linearGradient></defs><rect x="0.75" y="0.75" width="15.5" height="15.5" fill="#f6f6f6" stroke="#8d8d8d" stroke-width="1.5"/><rect x="2.5" y="2.5" width="12" height="12" fill="url(#cg6)"/></svg>
<svg class="a" style="left:1042px;top:837px" width="30" height="16" viewBox="0 0 30 16"><path d="M2 14.5H28.5V2" stroke="#b6d6f4" stroke-width="1.6" fill="none"/><rect x="0.75" y="0.75" width="26.5" height="12.5" fill="#fff" stroke="#98c386" stroke-width="1.5"/><text x="12" y="10.6" font-family="Liberation Sans" font-size="8.5" font-weight="bold" fill="#4173a3" text-anchor="middle" letter-spacing="0.3">ACH</text><path d="M23 4.5H25M23 7H25M23 9.5H25" stroke="#90d080" stroke-width="1"/></svg>
<svg class="a" style="left:1241px;top:820px" width="16" height="16" viewBox="0 0 16 16"><path d="M4.8 0.5H10.2L15.5 4.8V10.2L10.2 15.5H4.8L0.5 10.2V4.8Z" fill="#c8161c"/><path d="M5.2 1.6H9.8L14.4 5.2V9.8L9.8 14.4H5.2L1.6 9.8V5.2Z" fill="#f26a6a"/><path d="M5.5 2.5H9.5L13.5 5.5V9.5L9.5 13.5H5.5L2.5 9.5V5.5Z" fill="#ee1111"/><rect x="6.9" y="3.3" width="2.2" height="6" fill="#fff"/><rect x="6.9" y="10.5" width="2.2" height="1.8" fill="#fff"/></svg>
<svg class="a" style="left:1241px;top:844px" width="16" height="16" viewBox="0 0 16 16"><path d="M4.8 0.5H10.2L15.5 4.8V10.2L10.2 15.5H4.8L0.5 10.2V4.8Z" fill="#c8161c"/><path d="M5.2 1.6H9.8L14.4 5.2V9.8L9.8 14.4H5.2L1.6 9.8V5.2Z" fill="#f26a6a"/><path d="M5.5 2.5H9.5L13.5 5.5V9.5L9.5 13.5H5.5L2.5 9.5V5.5Z" fill="#ee1111"/><rect x="6.9" y="3.3" width="2.2" height="6" fill="#fff"/><rect x="6.9" y="10.5" width="2.2" height="1.8" fill="#fff"/></svg>
<svg class="a" style="left:761px;top:898px" width="20" height="17" viewBox="0 0 20 17"><path d="M2.5 15.5H18.5V2.5" stroke="#c4def6" stroke-width="1.5" fill="none"/><rect x="0.5" y="0.5" width="17" height="14" fill="#e0f5d3" stroke="#a3c993"/><path d="M17.5 1V14.5H1" stroke="#7aa666" stroke-width="1" fill="none"/><rect x="1.5" y="1.5" width="15" height="12" fill="none" stroke="#f1fbec" stroke-width="1"/><path d="M8.3 5.3Q8 4 6.8 4H5.6Q4.3 4 4.3 5.4V9.6Q4.3 11 5.6 11H6.9Q8.2 11 8.2 9.7V8.3H6.6" stroke="#5b8c52" stroke-width="1.2" fill="none"/><path d="M10.6 3.8V11H14.2" stroke="#5b8c52" stroke-width="1.2" fill="none"/></svg>
<svg class="a" style="left:831px;top:898px" width="17" height="17" viewBox="0 0 17 17"><defs><linearGradient id="cg7" x1="0" y1="0" x2="1" y2="1"><stop offset="0" stop-color="#c9c9c9"/><stop offset="1" stop-color="#fbfbfb"/></linearGradient></defs><rect x="0.75" y="0.75" width="15.5" height="15.5" fill="#f6f6f6" stroke="#8d8d8d" stroke-width="1.5"/><rect x="2.5" y="2.5" width="12" height="12" fill="url(#cg7)"/></svg>
<svg class="a" style="left:1042px;top:901px" width="30" height="16" viewBox="0 0 30 16"><path d="M2 14.5H28.5V2" stroke="#b6d6f4" stroke-width="1.6" fill="none"/><rect x="0.75" y="0.75" width="26.5" height="12.5" fill="#fff" stroke="#98c386" stroke-width="1.5"/><text x="12" y="10.6" font-family="Liberation Sans" font-size="8.5" font-weight="bold" fill="#4173a3" text-anchor="middle" letter-spacing="0.3">ACH</text><path d="M23 4.5H25M23 7H25M23 9.5H25" stroke="#90d080" stroke-width="1"/></svg>
<svg class="a" style="left:1241px;top:884px" width="16" height="16" viewBox="0 0 16 16"><path d="M4.8 0.5H10.2L15.5 4.8V10.2L10.2 15.5H4.8L0.5 10.2V4.8Z" fill="#c8161c"/><path d="M5.2 1.6H9.8L14.4 5.2V9.8L9.8 14.4H5.2L1.6 9.8V5.2Z" fill="#f26a6a"/><path d="M5.5 2.5H9.5L13.5 5.5V9.5L9.5 13.5H5.5L2.5 9.5V5.5Z" fill="#ee1111"/><rect x="6.9" y="3.3" width="2.2" height="6" fill="#fff"/><rect x="6.9" y="10.5" width="2.2" height="1.8" fill="#fff"/></svg>
<svg class="a" style="left:1241px;top:908px" width="16" height="16" viewBox="0 0 16 16"><path d="M4.8 0.5H10.2L15.5 4.8V10.2L10.2 15.5H4.8L0.5 10.2V4.8Z" fill="#c8161c"/><path d="M5.2 1.6H9.8L14.4 5.2V9.8L9.8 14.4H5.2L1.6 9.8V5.2Z" fill="#f26a6a"/><path d="M5.5 2.5H9.5L13.5 5.5V9.5L9.5 13.5H5.5L2.5 9.5V5.5Z" fill="#ee1111"/><rect x="6.9" y="3.3" width="2.2" height="6" fill="#fff"/><rect x="6.9" y="10.5" width="2.2" height="1.8" fill="#fff"/></svg>
<svg class="a" style="left:761px;top:962px" width="20" height="17" viewBox="0 0 20 17"><path d="M2.5 15.5H18.5V2.5" stroke="#c4def6" stroke-width="1.5" fill="none"/><rect x="0.5" y="0.5" width="17" height="14" fill="#e0f5d3" stroke="#a3c993"/><path d="M17.5 1V14.5H1" stroke="#7aa666" stroke-width="1" fill="none"/><rect x="1.5" y="1.5" width="15" height="12" fill="none" stroke="#f1fbec" stroke-width="1"/><path d="M8.3 5.3Q8 4 6.8 4H5.6Q4.3 4 4.3 5.4V9.6Q4.3 11 5.6 11H6.9Q8.2 11 8.2 9.7V8.3H6.6" stroke="#5b8c52" stroke-width="1.2" fill="none"/><path d="M10.6 3.8V11H14.2" stroke="#5b8c52" stroke-width="1.2" fill="none"/></svg>
<svg class="a" style="left:831px;top:962px" width="17" height="17" viewBox="0 0 17 17"><defs><linearGradient id="cg8" x1="0" y1="0" x2="1" y2="1"><stop offset="0" stop-color="#c9c9c9"/><stop offset="1" stop-color="#fbfbfb"/></linearGradient></defs><rect x="0.75" y="0.75" width="15.5" height="15.5" fill="#f6f6f6" stroke="#8d8d8d" stroke-width="1.5"/><rect x="2.5" y="2.5" width="12" height="12" fill="url(#cg8)"/></svg>
<svg class="a" style="left:1042px;top:965px" width="30" height="16" viewBox="0 0 30 16"><path d="M2 14.5H28.5V2" stroke="#b6d6f4" stroke-width="1.6" fill="none"/><defs><linearGradient id="pc8" x1="0" y1="0" x2="1" y2="0"><stop offset="0" stop-color="#ffffff"/><stop offset="1" stop-color="#dcf6cc"/></linearGradient></defs><rect x="0.5" y="0.5" width="27" height="13" fill="url(#pc8)" stroke="#9fb0c2"/><rect x="4" y="3" width="7" height="2" fill="#cacaca"/><rect x="4" y="7" width="14" height="1" fill="#d2dad2"/><rect x="4" y="10" width="22" height="1.2" fill="#c8c8c8"/><rect x="20.5" y="6" width="4" height="2.5" fill="none" stroke="#c0c0c0" stroke-width=".9"/></svg>
<svg class="a" style="left:1241px;top:948px" width="16" height="16" viewBox="0 0 16 16"><path d="M4.8 0.5H10.2L15.5 4.8V10.2L10.2 15.5H4.8L0.5 10.2V4.8Z" fill="#c8161c"/><path d="M5.2 1.6H9.8L14.4 5.2V9.8L9.8 14.4H5.2L1.6 9.8V5.2Z" fill="#f26a6a"/><path d="M5.5 2.5H9.5L13.5 5.5V9.5L9.5 13.5H5.5L2.5 9.5V5.5Z" fill="#ee1111"/><rect x="6.9" y="3.3" width="2.2" height="6" fill="#fff"/><rect x="6.9" y="10.5" width="2.2" height="1.8" fill="#fff"/></svg>
<svg class="a" style="left:1241px;top:972px" width="16" height="16" viewBox="0 0 16 16"><path d="M4.8 0.5H10.2L15.5 4.8V10.2L10.2 15.5H4.8L0.5 10.2V4.8Z" fill="#c8161c"/><path d="M5.2 1.6H9.8L14.4 5.2V9.8L9.8 14.4H5.2L1.6 9.8V5.2Z" fill="#f26a6a"/><path d="M5.5 2.5H9.5L13.5 5.5V9.5L9.5 13.5H5.5L2.5 9.5V5.5Z" fill="#ee1111"/><rect x="6.9" y="3.3" width="2.2" height="6" fill="#fff"/><rect x="6.9" y="10.5" width="2.2" height="1.8" fill="#fff"/></svg>
<svg class="a" style="left:761px;top:1026px" width="20" height="17" viewBox="0 0 20 17"><path d="M2.5 15.5H18.5V2.5" stroke="#c4def6" stroke-width="1.5" fill="none"/><rect x="0.5" y="0.5" width="17" height="14" fill="#e0f5d3" stroke="#a3c993"/><path d="M17.5 1V14.5H1" stroke="#7aa666" stroke-width="1" fill="none"/><rect x="1.5" y="1.5" width="15" height="12" fill="none" stroke="#f1fbec" stroke-width="1"/><path d="M8.3 5.3Q8 4 6.8 4H5.6Q4.3 4 4.3 5.4V9.6Q4.3 11 5.6 11H6.9Q8.2 11 8.2 9.7V8.3H6.6" stroke="#5b8c52" stroke-width="1.2" fill="none"/><path d="M10.6 3.8V11H14.2" stroke="#5b8c52" stroke-width="1.2" fill="none"/></svg>
<svg class="a" style="left:831px;top:1026px" width="17" height="17" viewBox="0 0 17 17"><defs><linearGradient id="cg9" x1="0" y1="0" x2="1" y2="1"><stop offset="0" stop-color="#c9c9c9"/><stop offset="1" stop-color="#fbfbfb"/></linearGradient></defs><rect x="0.75" y="0.75" width="15.5" height="15.5" fill="#f6f6f6" stroke="#8d8d8d" stroke-width="1.5"/><rect x="2.5" y="2.5" width="12" height="12" fill="url(#cg9)"/></svg>
<svg class="a" style="left:1042px;top:1029px" width="30" height="16" viewBox="0 0 30 16"><path d="M2 14.5H28.5V2" stroke="#b6d6f4" stroke-width="1.6" fill="none"/><defs><linearGradient id="pc9" x1="0" y1="0" x2="1" y2="0"><stop offset="0" stop-color="#ffffff"/><stop offset="1" stop-color="#dcf6cc"/></linearGradient></defs><rect x="0.5" y="0.5" width="27" height="13" fill="url(#pc9)" stroke="#9fb0c2"/><rect x="4" y="3" width="7" height="2" fill="#cacaca"/><rect x="4" y="7" width="14" height="1" fill="#d2dad2"/><rect x="4" y="10" width="22" height="1.2" fill="#c8c8c8"/><rect x="20.5" y="6" width="4" height="2.5" fill="none" stroke="#c0c0c0" stroke-width=".9"/></svg>
<svg class="a" style="left:1241px;top:1012px" width="16" height="16" viewBox="0 0 16 16"><path d="M4.8 0.5H10.2L15.5 4.8V10.2L10.2 15.5H4.8L0.5 10.2V4.8Z" fill="#c8161c"/><path d="M5.2 1.6H9.8L14.4 5.2V9.8L9.8 14.4H5.2L1.6 9.8V5.2Z" fill="#f26a6a"/><path d="M5.5 2.5H9.5L13.5 5.5V9.5L9.5 13.5H5.5L2.5 9.5V5.5Z" fill="#ee1111"/><rect x="6.9" y="3.3" width="2.2" height="6" fill="#fff"/><rect x="6.9" y="10.5" width="2.2" height="1.8" fill="#fff"/></svg>
<svg class="a" style="left:1241px;top:1036px" width="16" height="16" viewBox="0 0 16 16"><path d="M4.8 0.5H10.2L15.5 4.8V10.2L10.2 15.5H4.8L0.5 10.2V4.8Z" fill="#c8161c"/><path d="M5.2 1.6H9.8L14.4 5.2V9.8L9.8 14.4H5.2L1.6 9.8V5.2Z" fill="#f26a6a"/><path d="M5.5 2.5H9.5L13.5 5.5V9.5L9.5 13.5H5.5L2.5 9.5V5.5Z" fill="#ee1111"/><rect x="6.9" y="3.3" width="2.2" height="6" fill="#fff"/><rect x="6.9" y="10.5" width="2.2" height="1.8" fill="#fff"/></svg>
<svg class="a" style="left:761px;top:1090px" width="20" height="17" viewBox="0 0 20 17"><path d="M2.5 15.5H18.5V2.5" stroke="#c4def6" stroke-width="1.5" fill="none"/><rect x="0.5" y="0.5" width="17" height="14" fill="#e0f5d3" stroke="#a3c993"/><path d="M17.5 1V14.5H1" stroke="#7aa666" stroke-width="1" fill="none"/><rect x="1.5" y="1.5" width="15" height="12" fill="none" stroke="#f1fbec" stroke-width="1"/><path d="M8.3 5.3Q8 4 6.8 4H5.6Q4.3 4 4.3 5.4V9.6Q4.3 11 5.6 11H6.9Q8.2 11 8.2 9.7V8.3H6.6" stroke="#5b8c52" stroke-width="1.2" fill="none"/><path d="M10.6 3.8V11H14.2" stroke="#5b8c52" stroke-width="1.2" fill="none"/></svg>
<svg class="a" style="left:831px;top:1090px" width="17" height="17" viewBox="0 0 17 17"><defs><linearGradient id="cg10" x1="0" y1="0" x2="1" y2="1"><stop offset="0" stop-color="#c9c9c9"/><stop offset="1" stop-color="#fbfbfb"/></linearGradient></defs><rect x="0.75" y="0.75" width="15.5" height="15.5" fill="#f6f6f6" stroke="#8d8d8d" stroke-width="1.5"/><rect x="2.5" y="2.5" width="12" height="12" fill="url(#cg10)"/></svg>
<svg class="a" style="left:1042px;top:1093px" width="30" height="16" viewBox="0 0 30 16"><path d="M2 14.5H28.5V2" stroke="#b6d6f4" stroke-width="1.6" fill="none"/><rect x="0.75" y="0.75" width="26.5" height="12.5" fill="#fff" stroke="#98c386" stroke-width="1.5"/><text x="12" y="10.6" font-family="Liberation Sans" font-size="8.5" font-weight="bold" fill="#4173a3" text-anchor="middle" letter-spacing="0.3">ACH</text><path d="M23 4.5H25M23 7H25M23 9.5H25" stroke="#90d080" stroke-width="1"/></svg>
<svg class="a" style="left:1241px;top:1076px" width="16" height="16" viewBox="0 0 16 16"><path d="M4.8 0.5H10.2L15.5 4.8V10.2L10.2 15.5H4.8L0.5 10.2V4.8Z" fill="#c8161c"/><path d="M5.2 1.6H9.8L14.4 5.2V9.8L9.8 14.4H5.2L1.6 9.8V5.2Z" fill="#f26a6a"/><path d="M5.5 2.5H9.5L13.5 5.5V9.5L9.5 13.5H5.5L2.5 9.5V5.5Z" fill="#ee1111"/><rect x="6.9" y="3.3" width="2.2" height="6" fill="#fff"/><rect x="6.9" y="10.5" width="2.2" height="1.8" fill="#fff"/></svg>
<svg class="a" style="left:1241px;top:1100px" width="16" height="16" viewBox="0 0 16 16"><path d="M4.8 0.5H10.2L15.5 4.8V10.2L10.2 15.5H4.8L0.5 10.2V4.8Z" fill="#c8161c"/><path d="M5.2 1.6H9.8L14.4 5.2V9.8L9.8 14.4H5.2L1.6 9.8V5.2Z" fill="#f26a6a"/><path d="M5.5 2.5H9.5L13.5 5.5V9.5L9.5 13.5H5.5L2.5 9.5V5.5Z" fill="#ee1111"/><rect x="6.9" y="3.3" width="2.2" height="6" fill="#fff"/><rect x="6.9" y="10.5" width="2.2" height="1.8" fill="#fff"/></svg>
<svg class="a" style="left:761px;top:1154px" width="20" height="17" viewBox="0 0 20 17"><path d="M2.5 15.5H18.5V2.5" stroke="#c4def6" stroke-width="1.5" fill="none"/><rect x="0.5" y="0.5" width="17" height="14" fill="#e0f5d3" stroke="#a3c993"/><path d="M17.5 1V14.5H1" stroke="#7aa666" stroke-width="1" fill="none"/><rect x="1.5" y="1.5" width="15" height="12" fill="none" stroke="#f1fbec" stroke-width="1"/><path d="M8.3 5.3Q8 4 6.8 4H5.6Q4.3 4 4.3 5.4V9.6Q4.3 11 5.6 11H6.9Q8.2 11 8.2 9.7V8.3H6.6" stroke="#5b8c52" stroke-width="1.2" fill="none"/><path d="M10.6 3.8V11H14.2" stroke="#5b8c52" stroke-width="1.2" fill="none"/></svg>
<svg class="a" style="left:831px;top:1154px" width="17" height="17" viewBox="0 0 17 17"><defs><linearGradient id="cg11" x1="0" y1="0" x2="1" y2="1"><stop offset="0" stop-color="#c9c9c9"/><stop offset="1" stop-color="#fbfbfb"/></linearGradient></defs><rect x="0.75" y="0.75" width="15.5" height="15.5" fill="#f6f6f6" stroke="#8d8d8d" stroke-width="1.5"/><rect x="2.5" y="2.5" width="12" height="12" fill="url(#cg11)"/></svg>
<svg class="a" style="left:1042px;top:1157px" width="30" height="16" viewBox="0 0 30 16"><path d="M2 14.5H28.5V2" stroke="#b6d6f4" stroke-width="1.6" fill="none"/><defs><linearGradient id="pc11" x1="0" y1="0" x2="1" y2="0"><stop offset="0" stop-color="#ffffff"/><stop offset="1" stop-color="#dcf6cc"/></linearGradient></defs><rect x="0.5" y="0.5" width="27" height="13" fill="url(#pc11)" stroke="#9fb0c2"/><rect x="4" y="3" width="7" height="2" fill="#cacaca"/><rect x="4" y="7" width="14" height="1" fill="#d2dad2"/><rect x="4" y="10" width="22" height="1.2" fill="#c8c8c8"/><rect x="20.5" y="6" width="4" height="2.5" fill="none" stroke="#c0c0c0" stroke-width=".9"/></svg>
<svg class="a" style="left:1241px;top:1140px" width="16" height="16" viewBox="0 0 16 16"><path d="M4.8 0.5H10.2L15.5 4.8V10.2L10.2 15.5H4.8L0.5 10.2V4.8Z" fill="#c8161c"/><path d="M5.2 1.6H9.8L14.4 5.2V9.8L9.8 14.4H5.2L1.6 9.8V5.2Z" fill="#f26a6a"/><path d="M5.5 2.5H9.5L13.5 5.5V9.5L9.5 13.5H5.5L2.5 9.5V5.5Z" fill="#ee1111"/><rect x="6.9" y="3.3" width="2.2" height="6" fill="#fff"/><rect x="6.9" y="10.5" width="2.2" height="1.8" fill="#fff"/></svg>
<svg class="a" style="left:1241px;top:1164px" width="16" height="16" viewBox="0 0 16 16"><path d="M4.8 0.5H10.2L15.5 4.8V10.2L10.2 15.5H4.8L0.5 10.2V4.8Z" fill="#c8161c"/><path d="M5.2 1.6H9.8L14.4 5.2V9.8L9.8 14.4H5.2L1.6 9.8V5.2Z" fill="#f26a6a"/><path d="M5.5 2.5H9.5L13.5 5.5V9.5L9.5 13.5H5.5L2.5 9.5V5.5Z" fill="#ee1111"/><rect x="6.9" y="3.3" width="2.2" height="6" fill="#fff"/><rect x="6.9" y="10.5" width="2.2" height="1.8" fill="#fff"/></svg>
<span class="t" style='top:15.1px;left:998.6px;transform-origin:0 0;font-size:14px;line-height:14px;color:#3b5b84;transform:scaleX(1.115);-webkit-text-stroke:0.25px #3b5b84;'>My Profile</span>
<span class="t" style='top:15.1px;left:1085.8px;transform-origin:0 0;font-size:14px;line-height:14px;color:#3b5b84;transform:scaleX(1.144);-webkit-text-stroke:0.25px #3b5b84;'>Training &amp; Support</span>
<span class="t" style='top:15.1px;left:1235.5px;transform-origin:0 0;font-size:14px;line-height:14px;color:#3b5b84;transform:scaleX(1.093);-webkit-text-stroke:0.25px #3b5b84;'>Feedback</span>
<span class="t" style='top:15.1px;left:1319.7px;transform-origin:0 0;font-size:14px;line-height:14px;color:#3b5b84;transform:scaleX(1.106);-webkit-text-stroke:0.25px #3b5b84;'>Change Password</span>
<span class="t" style='top:15.1px;left:1463.6px;transform-origin:0 0;font-size:14px;line-height:14px;color:#3b5b84;transform:scaleX(1.107);-webkit-text-stroke:0.25px #3b5b84;'>Logout</span>
<span class="t" style='top:58.5px;left:1266.8px;transform-origin:0 0;font-size:13px;line-height:13px;color:#505050;transform:scaleX(0.965);-webkit-text-stroke:0.25px #505050;'>Find:</span>
<span class="t" style='top:53.7px;left:1313.3px;transform-origin:0 0;font-size:15.5px;line-height:15.5px;color:#7b7b7b;transform:scaleX(1.050);-webkit-text-stroke:0.25px #7b7b7b;'>enter invoice # or ref #</span>
<span class="t" style='top:75.3px;left:1299.3px;transform-origin:0 0;font-size:13px;line-height:13px;color:#2b5b8c;transform:scaleX(1.015);-webkit-text-stroke:0.25px #2b5b8c;'>More Options</span>
<span class="t" style='top:94.7px;left:72.7px;transform-origin:0 0;font-size:16px;line-height:16px;color:#fff;font-weight:bold;transform:scaleX(1.075);-webkit-text-stroke:0.5px #fff'>Welcome</span>
<span class="t" style='top:94.7px;left:243.6px;transform-origin:0 0;font-size:16px;line-height:16px;color:#fff;font-weight:bold;transform:scaleX(1.049);-webkit-text-stroke:0.5px #fff'>Enter Bills</span>
<span class="t" style='top:95.2px;left:407.0px;transform-origin:0 0;font-size:16px;line-height:16px;color:#1a5196;font-weight:bold;transform:scaleX(1.051);-webkit-text-stroke:0.5px #1a5196'>Approve Bills</span>
<span class="t" style='top:94.7px;left:601.3px;transform-origin:0 0;font-size:16px;line-height:16px;color:#fff;font-weight:bold;transform:scaleX(1.060);-webkit-text-stroke:0.5px #fff'>Pay Bills</span>
<span class="t" style='top:97.6px;left:755.7px;transform-origin:0 0;font-size:14px;line-height:14px;color:#e8eef6;transform:scaleX(1.136);-webkit-text-stroke:0.25px #e8eef6;'>Bill Status</span>
<span class="t" style='top:97.6px;left:852.0px;transform-origin:0 0;font-size:14px;line-height:14px;color:#e8eef6;transform:scaleX(1.124);-webkit-text-stroke:0.25px #e8eef6;'>Reports</span>
<span class="t" style='top:97.6px;left:931.7px;transform-origin:0 0;font-size:14px;line-height:14px;color:#e8eef6;transform:scaleX(1.156);-webkit-text-stroke:0.25px #e8eef6;'>Administration</span>
<span class="t" style='top:168.9px;left:39.4px;transform-origin:0 0;font-size:21px;line-height:21px;color:#fff;font-weight:bold;transform:scaleX(0.994);-webkit-text-stroke:0.7px #fff'>All Bills Awaiting Approval</span>
<span class="t" style='top:173.9px;left:316.5px;transform-origin:0 0;font-size:13.5px;line-height:13.5px;color:#dbe9f5;transform:scaleX(1.208);-webkit-text-stroke:0.25px #dbe9f5;'>(330 - $687,150.31)</span>
<span class="t" style='top:213.9px;left:39.0px;transform-origin:0 0;font-size:14px;line-height:14px;color:#d5e6f4;transform:scaleX(1.165);-webkit-text-stroke:0.25px #d5e6f4;'>View Bills by:</span>
<span class="t" style='top:213.9px;left:159.5px;transform-origin:0 0;font-size:14px;line-height:14px;color:#eef5fb;transform:scaleX(1.092);-webkit-text-stroke:0.25px #eef5fb;'>All</span>
<span class="t" style='top:213.9px;left:201.7px;transform-origin:0 0;font-size:14px;line-height:14px;color:#eef5fb;transform:scaleX(1.121);-webkit-text-stroke:0.25px #eef5fb;'>Due Date</span>
<span class="t" style='top:213.9px;left:292.9px;transform-origin:0 0;font-size:14px;line-height:14px;color:#eef5fb;transform:scaleX(1.081);-webkit-text-stroke:0.25px #eef5fb;'>Payee</span>
<span class="t" style='top:213.9px;left:360.0px;transform-origin:0 0;font-size:14px;line-height:14px;color:#eef5fb;transform:scaleX(1.129);-webkit-text-stroke:0.25px #eef5fb;'>Assigned to</span>
<span class="t" style='top:213.9px;left:466.8px;transform-origin:0 0;font-size:14px;line-height:14px;color:#eef5fb;transform:scaleX(1.134);-webkit-text-stroke:0.25px #eef5fb;'>Amount</span>
<span class="t" style='top:256.9px;left:33.5px;transform-origin:0 0;font-size:13.5px;line-height:13.5px;color:#333;font-weight:bold;transform:scaleX(1.208);-webkit-text-stroke:0.2px #333;'>Showing:</span>
<span class="t" style='top:256.9px;left:111.3px;transform-origin:0 0;font-size:13.5px;line-height:13.5px;color:#444;transform:scaleX(1.178);-webkit-text-stroke:0.25px #444;'>Payee:</span>
<span class="t" style='top:256.9px;left:372.8px;transform-origin:0 0;font-size:13.5px;line-height:13.5px;color:#444;transform:scaleX(1.203);-webkit-text-stroke:0.25px #444;'>Amount:</span>
<span class="t" style='top:256.9px;left:626.0px;transform-origin:0 0;font-size:13.5px;line-height:13.5px;color:#444;transform:scaleX(1.181);-webkit-text-stroke:0.25px #444;'>Assigned To:</span>
<span class="t" style='top:260.5px;left:172.7px;transform-origin:0 0;font-size:13px;line-height:13px;color:#111;transform:scaleX(1.123);-webkit-text-stroke:0.25px #111;'>-- All --</span>
<span class="t" style='top:260.5px;left:445.5px;transform-origin:0 0;font-size:13px;line-height:13px;color:#111;transform:scaleX(1.118);-webkit-text-stroke:0.25px #111;'>--All--</span>
<span class="t" style='top:260.5px;left:730.0px;transform-origin:0 0;font-size:13px;line-height:13px;color:#111;transform:scaleX(1.124);-webkit-text-stroke:0.25px #111;'>--All--</span>
<span class="t" style='top:344.1px;left:40.5px;transform-origin:0 0;font-size:13.5px;line-height:13.5px;color:#677d92;font-weight:bold;transform:scaleX(1.275);-webkit-text-stroke:0.2px #677d92;'>30 of 330 Bills</span>
<span class="t" style='top:341.9px;left:331.5px;transform-origin:0 0;font-size:13.5px;line-height:13.5px;color:#333;transform:scaleX(0.974);-webkit-text-stroke:0.25px #333;'>Approve All</span>
<span class="t" style='top:341.9px;left:479.6px;transform-origin:0 0;font-size:13.5px;line-height:13.5px;color:#333;transform:scaleX(0.983);-webkit-text-stroke:0.25px #333;'>Approve Selected</span>
<span class="t" style='top:345.7px;left:1189.0px;transform-origin:0 0;font-size:14px;line-height:14px;color:#444;transform:scaleX(1.077);-webkit-text-stroke:0.25px #444;'>Page:</span>
<span class="t" style='top:346.5px;left:1349.8px;transform-origin:50% 0;font-size:15px;line-height:15px;color:#111;font-weight:bold;-webkit-text-stroke:0.5px #111'>1</span>
<span class="t" style='top:344.1px;left:1386.8px;transform-origin:0 0;font-size:14px;line-height:14px;color:#444;transform:scaleX(1.162);-webkit-text-stroke:0.25px #444;'>of 11</span>
<span class="t" style='top:385.4px;left:180.8px;transform-origin:0 0;font-size:13.5px;line-height:13.5px;color:#6783a0;font-weight:bold;transform:scaleX(1.180);-webkit-text-stroke:0.2px #6783a0;text-decoration:underline'>Bill</span>
<span class="t" style='top:385.4px;left:471.7px;transform-origin:0 0;font-size:13.5px;line-height:13.5px;color:#6783a0;font-weight:bold;transform:scaleX(1.275);-webkit-text-stroke:0.2px #6783a0;text-decoration:underline'>Payee</span>
<span class="t" style='top:385.4px;left:684.8px;transform-origin:0 0;font-size:13.5px;line-height:13.5px;color:#6783a0;font-weight:bold;transform:scaleX(1.216);-webkit-text-stroke:0.2px #6783a0;text-decoration:underline'>Amount</span>
<span class="t" style='top:385.4px;left:811.9px;transform-origin:0 0;font-size:13.5px;line-height:13.5px;color:#6783a0;font-weight:bold;transform:scaleX(1.236);-webkit-text-stroke:0.2px #6783a0;'>Approve</span>
<span class="t" style='top:385.4px;left:905.6px;transform-origin:0 0;font-size:13.5px;line-height:13.5px;color:#6783a0;font-weight:bold;transform:scaleX(1.254);-webkit-text-stroke:0.2px #6783a0;text-decoration:underline'>Due Date</span>
<span class="t" style='top:385.4px;left:1030.7px;transform-origin:0 0;font-size:13.5px;line-height:13.5px;color:#6783a0;font-weight:bold;transform:scaleX(1.260);-webkit-text-stroke:0.2px #6783a0;text-decoration:underline'>Payment</span>
<span class="t" style='top:385.4px;left:1127.5px;transform-origin:0 0;font-size:13.5px;line-height:13.5px;color:#6783a0;font-weight:bold;transform:scaleX(1.226);-webkit-text-stroke:0.2px #6783a0;text-decoration:underline'>Assigned To</span>
<span class="t" style='top:385.4px;left:1305.5px;transform-origin:0 0;font-size:13.5px;line-height:13.5px;color:#6783a0;font-weight:bold;transform:scaleX(1.226);-webkit-text-stroke:0.2px #6783a0;'>Notes</span>
<span class="t" style='top:385.4px;left:1425.8px;transform-origin:0 0;font-size:13.5px;line-height:13.5px;color:#6783a0;font-weight:bold;transform:scaleX(1.235);-webkit-text-stroke:0.2px #6783a0;text-decoration:underline'>Approved By</span>
<span class="t" style='top:405.6px;left:652.5px;transform-origin:0 0;font-size:13.5px;line-height:13.5px;color:#151515;font-weight:bold;transform:scaleX(1.315);-webkit-text-stroke:0.2px #151515;'>$687,150.31</span>
<span class="t" style='top:451.8px;right:785.8px;transform-origin:100% 0;font-size:14px;line-height:14px;color:#1c1c1c;transform:scaleX(1.132);-webkit-text-stroke:0.35px #1c1c1c'>$1,000.00</span>
<span class="t" style='top:451.8px;right:528.7px;transform-origin:100% 0;font-size:14px;line-height:14px;color:#d2502d;transform:scaleX(1.192);-webkit-text-stroke:0.1px #d2502d'>4/15/2011</span>
<span class="t" style='top:437.9px;left:1261.9px;transform-origin:0 0;font-size:14px;line-height:14px;color:#d2502d;transform:scaleX(1.089);-webkit-text-stroke:0.25px #d2502d;'>Past Due</span>
<span class="t" style='top:461.9px;left:1261.9px;transform-origin:0 0;font-size:14px;line-height:14px;color:#d2502d;transform:scaleX(1.141);-webkit-text-stroke:0.25px #d2502d;'>Waiting 23 days</span>
<span class="t" style='top:451.3px;left:1416.3px;transform-origin:0 0;font-size:14px;line-height:14px;color:#1c1c1c;transform:scaleX(1.148);-webkit-text-stroke:0.35px #1c1c1c'>2 of 4</span>
<span class="t" style='top:515.8px;right:785.8px;transform-origin:100% 0;font-size:14px;line-height:14px;color:#1c1c1c;transform:scaleX(1.132);-webkit-text-stroke:0.35px #1c1c1c'>$222.00</span>
<span class="t" style='top:515.8px;right:528.7px;transform-origin:100% 0;font-size:14px;line-height:14px;color:#d2502d;transform:scaleX(1.192);-webkit-text-stroke:0.1px #d2502d'>4/18/2011</span>
<span class="t" style='top:501.9px;left:1261.9px;transform-origin:0 0;font-size:14px;line-height:14px;color:#d2502d;transform:scaleX(1.089);-webkit-text-stroke:0.25px #d2502d;'>Past Due</span>
<span class="t" style='top:525.9px;left:1261.9px;transform-origin:0 0;font-size:14px;line-height:14px;color:#d2502d;transform:scaleX(1.141);-webkit-text-stroke:0.25px #d2502d;'>Waiting 23 days</span>
<span class="t" style='top:515.3px;left:1416.3px;transform-origin:0 0;font-size:14px;line-height:14px;color:#1c1c1c;transform:scaleX(1.148);-webkit-text-stroke:0.35px #1c1c1c'>2 of 3</span>
<span class="t" style='top:579.8px;right:785.8px;transform-origin:100% 0;font-size:14px;line-height:14px;color:#1c1c1c;transform:scaleX(1.132);-webkit-text-stroke:0.35px #1c1c1c'>$1,000.00</span>
<span class="t" style='top:579.8px;right:528.7px;transform-origin:100% 0;font-size:14px;line-height:14px;color:#d2502d;transform:scaleX(1.192);-webkit-text-stroke:0.1px #d2502d'>4/18/2011</span>
<span class="t" style='top:565.9px;left:1261.9px;transform-origin:0 0;font-size:14px;line-height:14px;color:#d2502d;transform:scaleX(1.089);-webkit-text-stroke:0.25px #d2502d;'>Past Due</span>
<span class="t" style='top:589.9px;left:1261.9px;transform-origin:0 0;font-size:14px;line-height:14px;color:#d2502d;transform:scaleX(1.141);-webkit-text-stroke:0.25px #d2502d;'>Waiting 23 days</span>
<span class="t" style='top:579.3px;left:1416.3px;transform-origin:0 0;font-size:14px;line-height:14px;color:#1c1c1c;transform:scaleX(1.148);-webkit-text-stroke:0.35px #1c1c1c'>2 of 4</span>
<span class="t" style='top:643.8px;right:785.8px;transform-origin:100% 0;font-size:14px;line-height:14px;color:#1c1c1c;transform:scaleX(1.132);-webkit-text-stroke:0.35px #1c1c1c'>$1,000.00</span>
<span class="t" style='top:643.8px;right:528.7px;transform-origin:100% 0;font-size:14px;line-height:14px;color:#d2502d;transform:scaleX(1.192);-webkit-text-stroke:0.1px #d2502d'>4/18/2011</span>
<span class="t" style='top:629.9px;left:1261.9px;transform-origin:0 0;font-size:14px;line-height:14px;color:#d2502d;transform:scaleX(1.089);-webkit-text-stroke:0.25px #d2502d;'>Past Due</span>
<span class="t" style='top:653.9px;left:1261.9px;transform-origin:0 0;font-size:14px;line-height:14px;color:#d2502d;transform:scaleX(1.141);-webkit-text-stroke:0.25px #d2502d;'>Waiting 23 days</span>
<span class="t" style='top:643.3px;left:1416.3px;transform-origin:0 0;font-size:14px;line-height:14px;color:#1c1c1c;transform:scaleX(1.148);-webkit-text-stroke:0.35px #1c1c1c'>2 of 4</span>
<span class="t" style='top:707.8px;right:785.8px;transform-origin:100% 0;font-size:14px;line-height:14px;color:#1c1c1c;transform:scaleX(1.132);-webkit-text-stroke:0.35px #1c1c1c'>$1,000.00</span>
<span class="t" style='top:707.8px;right:528.7px;transform-origin:100% 0;font-size:14px;line-height:14px;color:#d2502d;transform:scaleX(1.192);-webkit-text-stroke:0.1px #d2502d'>4/18/2011</span>
<span class="t" style='top:693.9px;left:1261.9px;transform-origin:0 0;font-size:14px;line-height:14px;color:#d2502d;transform:scaleX(1.089);-webkit-text-stroke:0.25px #d2502d;'>Past Due</span>
<span class="t" style='top:717.9px;left:1261.9px;transform-origin:0 0;font-size:14px;line-height:14px;color:#d2502d;transform:scaleX(1.141);-webkit-text-stroke:0.25px #d2502d;'>Waiting 23 days</span>
<span class="t" style='top:707.3px;left:1416.3px;transform-origin:0 0;font-size:14px;line-height:14px;color:#1c1c1c;transform:scaleX(1.148);-webkit-text-stroke:0.35px #1c1c1c'>2 of 4</span>
<span class="t" style='top:771.8px;right:785.8px;transform-origin:100% 0;font-size:14px;line-height:14px;color:#1c1c1c;transform:scaleX(1.132);-webkit-text-stroke:0.35px #1c1c1c'>$1.00</span>
<span class="t" style='top:771.8px;right:528.7px;transform-origin:100% 0;font-size:14px;line-height:14px;color:#d2502d;transform:scaleX(1.192);-webkit-text-stroke:0.1px #d2502d'>4/20/2011</span>
<span class="t" style='top:757.9px;left:1261.9px;transform-origin:0 0;font-size:14px;line-height:14px;color:#d2502d;transform:scaleX(1.089);-webkit-text-stroke:0.25px #d2502d;'>Past Due</span>
<span class="t" style='top:781.9px;left:1261.9px;transform-origin:0 0;font-size:14px;line-height:14px;color:#d2502d;transform:scaleX(1.141);-webkit-text-stroke:0.25px #d2502d;'>Waiting 23 days</span>
<span class="t" style='top:771.3px;left:1416.3px;transform-origin:0 0;font-size:14px;line-height:14px;color:#1c1c1c;transform:scaleX(1.148);-webkit-text-stroke:0.35px #1c1c1c'>2 of 3</span>
<span class="t" style='top:835.8px;right:785.8px;transform-origin:100% 0;font-size:14px;line-height:14px;color:#1c1c1c;transform:scaleX(1.132);-webkit-text-stroke:0.35px #1c1c1c'>$11.00</span>
<span class="t" style='top:835.8px;right:528.7px;transform-origin:100% 0;font-size:14px;line-height:14px;color:#d2502d;transform:scaleX(1.192);-webkit-text-stroke:0.1px #d2502d'>4/20/2011</span>
<span class="t" style='top:821.9px;left:1261.9px;transform-origin:0 0;font-size:14px;line-height:14px;color:#d2502d;transform:scaleX(1.089);-webkit-text-stroke:0.25px #d2502d;'>Past Due</span>
<span class="t" style='top:845.9px;left:1261.9px;transform-origin:0 0;font-size:14px;line-height:14px;color:#d2502d;transform:scaleX(1.141);-webkit-text-stroke:0.25px #d2502d;'>Waiting 23 days</span>
<span class="t" style='top:835.3px;left:1416.3px;transform-origin:0 0;font-size:14px;line-height:14px;color:#1c1c1c;transform:scaleX(1.148);-webkit-text-stroke:0.35px #1c1c1c'>2 of 3</span>
<span class="t" style='top:899.8px;right:785.8px;transform-origin:100% 0;font-size:14px;line-height:14px;color:#1c1c1c;transform:scaleX(1.132);-webkit-text-stroke:0.35px #1c1c1c'>$211.00</span>
<span class="t" style='top:899.8px;right:528.7px;transform-origin:100% 0;font-size:14px;line-height:14px;color:#d2502d;transform:scaleX(1.192);-webkit-text-stroke:0.1px #d2502d'>4/20/2011</span>
<span class="t" style='top:885.9px;left:1261.9px;transform-origin:0 0;font-size:14px;line-height:14px;color:#d2502d;transform:scaleX(1.089);-webkit-text-stroke:0.25px #d2502d;'>Past Due</span>
<span class="t" style='top:909.9px;left:1261.9px;transform-origin:0 0;font-size:14px;line-height:14px;color:#d2502d;transform:scaleX(1.141);-webkit-text-stroke:0.25px #d2502d;'>Waiting 23 days</span>
<span class="t" style='top:899.3px;left:1416.3px;transform-origin:0 0;font-size:14px;line-height:14px;color:#1c1c1c;transform:scaleX(1.148);-webkit-text-stroke:0.35px #1c1c1c'>2 of 3</span>
<span class="t" style='top:963.8px;right:785.8px;transform-origin:100% 0;font-size:14px;line-height:14px;color:#1c1c1c;transform:scaleX(1.132);-webkit-text-stroke:0.35px #1c1c1c'>$33.00</span>
<span class="t" style='top:963.8px;right:528.7px;transform-origin:100% 0;font-size:14px;line-height:14px;color:#d2502d;transform:scaleX(1.192);-webkit-text-stroke:0.1px #d2502d'>4/20/2011</span>
<span class="t" style='top:949.9px;left:1261.9px;transform-origin:0 0;font-size:14px;line-height:14px;color:#d2502d;transform:scaleX(1.089);-webkit-text-stroke:0.25px #d2502d;'>Past Due</span>
<span class="t" style='top:973.9px;left:1261.9px;transform-origin:0 0;font-size:14px;line-height:14px;color:#d2502d;transform:scaleX(1.141);-webkit-text-stroke:0.25px #d2502d;'>Waiting 23 days</span>
<span class="t" style='top:963.3px;left:1416.3px;transform-origin:0 0;font-size:14px;line-height:14px;color:#1c1c1c;transform:scaleX(1.148);-webkit-text-stroke:0.35px #1c1c1c'>2 of 3</span>
<span class="t" style='top:1027.8px;right:785.8px;transform-origin:100% 0;font-size:14px;line-height:14px;color:#1c1c1c;transform:scaleX(1.132);-webkit-text-stroke:0.35px #1c1c1c'>$454.00</span>
<span class="t" style='top:1027.8px;right:528.7px;transform-origin:100% 0;font-size:14px;line-height:14px;color:#d2502d;transform:scaleX(1.192);-webkit-text-stroke:0.1px #d2502d'>4/20/2011</span>
<span class="t" style='top:1013.9px;left:1261.9px;transform-origin:0 0;font-size:14px;line-height:14px;color:#d2502d;transform:scaleX(1.089);-webkit-text-stroke:0.25px #d2502d;'>Past Due</span>
<span class="t" style='top:1037.9px;left:1261.9px;transform-origin:0 0;font-size:14px;line-height:14px;color:#d2502d;transform:scaleX(1.141);-webkit-text-stroke:0.25px #d2502d;'>Waiting 23 days</span>
<span class="t" style='top:1027.3px;left:1416.3px;transform-origin:0 0;font-size:14px;line-height:14px;color:#1c1c1c;transform:scaleX(1.148);-webkit-text-stroke:0.35px #1c1c1c'>2 of 3</span>
<span class="t" style='top:1091.8px;right:785.8px;transform-origin:100% 0;font-size:14px;line-height:14px;color:#1c1c1c;transform:scaleX(1.132);-webkit-text-stroke:0.35px #1c1c1c'>$200.00</span>
<span class="t" style='top:1091.8px;right:528.7px;transform-origin:100% 0;font-size:14px;line-height:14px;color:#d2502d;transform:scaleX(1.192);-webkit-text-stroke:0.1px #d2502d'>4/21/2011</span>
<span class="t" style='top:1077.9px;left:1261.9px;transform-origin:0 0;font-size:14px;line-height:14px;color:#d2502d;transform:scaleX(1.089);-webkit-text-stroke:0.25px #d2502d;'>Past Due</span>
<span class="t" style='top:1101.9px;left:1261.9px;transform-origin:0 0;font-size:14px;line-height:14px;color:#d2502d;transform:scaleX(1.141);-webkit-text-stroke:0.25px #d2502d;'>Waiting 23 days</span>
<span class="t" style='top:1091.3px;left:1416.3px;transform-origin:0 0;font-size:14px;line-height:14px;color:#1c1c1c;transform:scaleX(1.148);-webkit-text-stroke:0.35px #1c1c1c'>2 of 3</span>
<span class="t" style='top:1155.8px;right:785.8px;transform-origin:100% 0;font-size:14px;line-height:14px;color:#1c1c1c;transform:scaleX(1.132);-webkit-text-stroke:0.35px #1c1c1c'>$22.00</span>
<span class="t" style='top:1155.8px;right:528.7px;transform-origin:100% 0;font-size:14px;line-height:14px;color:#d2502d;transform:scaleX(1.192);-webkit-text-stroke:0.1px #d2502d'>4/21/2011</span>
<span class="t" style='top:1141.9px;left:1261.9px;transform-origin:0 0;font-size:14px;line-height:14px;color:#d2502d;transform:scaleX(1.089);-webkit-text-stroke:0.25px #d2502d;'>Past Due</span>
<span class="t" style='top:1165.9px;left:1261.9px;transform-origin:0 0;font-size:14px;line-height:14px;color:#d2502d;transform:scaleX(1.141);-webkit-text-stroke:0.25px #d2502d;'>Waiting 23 days</span>
<span class="t" style='top:1155.3px;left:1416.3px;transform-origin:0 0;font-size:14px;line-height:14px;color:#1c1c1c;transform:scaleX(1.148);-webkit-text-stroke:0.35px #1c1c1c'>2 of 3</span>
</body></html>
